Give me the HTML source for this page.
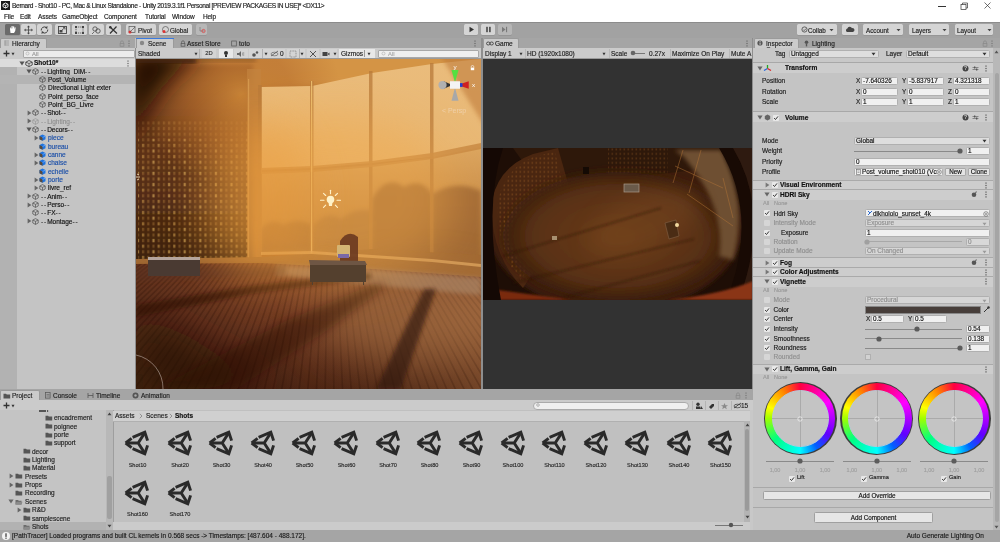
<!DOCTYPE html>
<html><head><meta charset="utf-8">
<style>
*{box-sizing:border-box;margin:0;padding:0}
html,body{width:1000px;height:542px;overflow:hidden;background:#c2c2c2;font-family:"Liberation Sans",sans-serif;font-size:6.5px;color:#111;position:relative}
.a{position:absolute;display:block}
.t{position:absolute;white-space:nowrap;line-height:1;-webkit-text-stroke:0.15px currentColor}
body{-webkit-font-smoothing:antialiased}
</style></head><body>
<div id="root" style="position:absolute;left:0;top:0;width:1000px;height:542px;overflow:hidden;will-change:transform"><div class="a" style="left:0px;top:0px;width:1000px;height:11px;background:#ffffff;"></div>
<div class="a" style="left:1px;top:1px;width:9px;height:9px;background:#1a1a1a;"></div>
<svg class="a" style="left:2px;top:2px;" width="7" height="7" viewBox="0 0 7 7"><path d="M3.5 1 L6 2.3 L6 4.7 L3.5 6 L1 4.7 L1 2.3Z" fill="none" stroke="#fff" stroke-width="0.9"/><path d="M3.5 3.5 L3.5 6 M3.5 3.5 L1 2.3 M3.5 3.5 L6 2.3" stroke="#fff" stroke-width="0.7"/></svg>
<div class="t" style="left:12px;top:3.28px;font-size:6.6px;color:#222;letter-spacing:-0.33px">Bernard - Shot10 - PC, Mac &amp; Linux Standalone - Unity 2019.3.1f1 Personal [PREVIEW PACKAGES IN USE]* &lt;DX11&gt;</div>
<div class="a" style="left:938px;top:5.5px;width:8px;height:0.7px;background:#333;"></div>
<svg class="a" style="left:960px;top:1.5px;" width="9" height="9" viewBox="0 0 9 9"><rect x="1" y="2.5" width="5" height="5" fill="none" stroke="#333" stroke-width="0.7"/><path d="M2.5 2.5 V1 H7.5 V6 H6" fill="none" stroke="#333" stroke-width="0.7"/></svg>
<svg class="a" style="left:984px;top:2px;" width="7" height="7" viewBox="0 0 7 7"><path d="M0.5 0.5 L6.5 6.5 M6.5 0.5 L0.5 6.5" stroke="#333" stroke-width="0.7"/></svg>
<div class="a" style="left:0px;top:11px;width:1000px;height:11px;background:#ffffff;"></div>
<div class="t" style="left:4px;top:13.92px;font-size:6.5px;color:#1a1a1a;letter-spacing:-0.1px">File</div>
<div class="t" style="left:20px;top:13.92px;font-size:6.5px;color:#1a1a1a;letter-spacing:-0.1px">Edit</div>
<div class="t" style="left:38px;top:13.92px;font-size:6.5px;color:#1a1a1a;letter-spacing:-0.1px">Assets</div>
<div class="t" style="left:62px;top:13.92px;font-size:6.5px;color:#1a1a1a;letter-spacing:-0.1px">GameObject</div>
<div class="t" style="left:104px;top:13.92px;font-size:6.5px;color:#1a1a1a;letter-spacing:-0.1px">Component</div>
<div class="t" style="left:145px;top:13.92px;font-size:6.5px;color:#1a1a1a;letter-spacing:-0.1px">Tutorial</div>
<div class="t" style="left:172px;top:13.92px;font-size:6.5px;color:#1a1a1a;letter-spacing:-0.1px">Window</div>
<div class="t" style="left:203px;top:13.92px;font-size:6.5px;color:#1a1a1a;letter-spacing:-0.1px">Help</div>
<div class="a" style="left:0px;top:22px;width:1000px;height:16px;background:#a2a2a2;"></div>
<div class="a" style="left:0px;top:22px;width:1000px;height:1px;background:#8c8c8c;"></div>
<div class="a" style="left:5px;top:24px;width:15px;height:11px;background:#6b6b6b;border-radius:1.5px;box-shadow:0 0.5px 0 #8a8a8a"></div>
<div class="a" style="left:21px;top:24px;width:15px;height:11px;background:#d5d5d5;border-radius:1.5px;box-shadow:0 0.5px 0 #8a8a8a"></div>
<div class="a" style="left:37px;top:24px;width:15px;height:11px;background:#d5d5d5;border-radius:1.5px;box-shadow:0 0.5px 0 #8a8a8a"></div>
<div class="a" style="left:55px;top:24px;width:15px;height:11px;background:#d5d5d5;border-radius:1.5px;box-shadow:0 0.5px 0 #8a8a8a"></div>
<div class="a" style="left:72px;top:24px;width:15px;height:11px;background:#d5d5d5;border-radius:1.5px;box-shadow:0 0.5px 0 #8a8a8a"></div>
<div class="a" style="left:89px;top:24px;width:15px;height:11px;background:#d5d5d5;border-radius:1.5px;box-shadow:0 0.5px 0 #8a8a8a"></div>
<div class="a" style="left:106px;top:24px;width:15px;height:11px;background:#d5d5d5;border-radius:1.5px;box-shadow:0 0.5px 0 #8a8a8a"></div>
<div class="a" style="left:126px;top:24px;width:30px;height:11px;background:#d5d5d5;border-radius:1.5px;box-shadow:0 0.5px 0 #8a8a8a"></div>
<div class="a" style="left:159px;top:24px;width:33px;height:11px;background:#d5d5d5;border-radius:1.5px;box-shadow:0 0.5px 0 #8a8a8a"></div>
<div class="a" style="left:196px;top:24px;width:11px;height:11px;background:#b8b8b8;border-radius:1.5px;box-shadow:0 0.5px 0 #8a8a8a"></div>
<svg class="a" style="left:8px;top:25px;" width="10" height="9" viewBox="0 0 10 9"><path d="M2.5 8 L2 4 L2.6 2 L3.4 4 L3.6 1 L4.6 1 L4.8 4 L5.2 1.2 L6.2 1.4 L6.2 4.3 L6.8 2.2 L7.7 2.6 L7.2 6 L6 8Z" fill="#fff"/></svg>
<svg class="a" style="left:23px;top:24.5px;" width="11" height="10" viewBox="0 0 11 10"><path d="M5.5 2 V8 M2.5 5 H8.5" stroke="#444" stroke-width="0.8"/><path d="M5.5 0.5 L4 2.2 H7Z M5.5 9.5 L4 7.8 H7Z M1 5 L2.7 3.5 V6.5Z M10 5 L8.3 3.5 V6.5Z" fill="#444"/></svg>
<svg class="a" style="left:39px;top:24.5px;" width="11" height="10" viewBox="0 0 11 10"><path d="M2.2 5.5 A3.3 3.3 0 0 1 7.5 2.6 M8.8 4.5 A3.3 3.3 0 0 1 3.5 7.4" fill="none" stroke="#444" stroke-width="1"/><path d="M8.5 1 L8.2 4 L5.8 2.8Z M2.5 9 L2.8 6 L5.2 7.2Z" fill="#444"/></svg>
<svg class="a" style="left:57px;top:24.5px;" width="11" height="10" viewBox="0 0 11 10"><rect x="1.5" y="1.5" width="8" height="7" fill="none" stroke="#444" stroke-width="0.9"/><rect x="2.5" y="5" width="3" height="2.5" fill="#444"/><path d="M5 5 L8 2.5 M6 2.5 H8 V4.5" stroke="#444" stroke-width="0.8" fill="none"/></svg>
<svg class="a" style="left:74px;top:24.5px;" width="11" height="10" viewBox="0 0 11 10"><rect x="2" y="2" width="7" height="6" fill="none" stroke="#444" stroke-width="0.8" stroke-dasharray="1.2 0.9"/><rect x="1" y="1" width="2" height="2" fill="#444"/><rect x="8" y="1" width="2" height="2" fill="#444"/><rect x="1" y="7" width="2" height="2" fill="#444"/><rect x="8" y="7" width="2" height="2" fill="#444"/></svg>
<svg class="a" style="left:91px;top:24.5px;" width="11" height="10" viewBox="0 0 11 10"><circle cx="4" cy="4" r="2.2" fill="none" stroke="#444" stroke-width="0.8"/><circle cx="7" cy="6" r="2.2" fill="none" stroke="#444" stroke-width="0.8"/><path d="M1 9 L3 7" stroke="#444" stroke-width="0.7"/></svg>
<svg class="a" style="left:108px;top:24.5px;" width="11" height="10" viewBox="0 0 11 10"><path d="M2 2 L9 8.5 M8.5 1.5 L2 8.5" stroke="#333" stroke-width="1.2"/><circle cx="2.3" cy="2.3" r="1.3" fill="#333"/></svg>
<svg class="a" style="left:128px;top:25px;" width="9" height="9" viewBox="0 0 9 9"><rect x="1" y="1.5" width="6" height="6" fill="none" stroke="#555" stroke-width="0.7"/><circle cx="2" cy="7" r="1.5" fill="#d33" /><path d="M2 7 L7 2" stroke="#555" stroke-width="0.7"/></svg>
<div class="t" style="left:138px;top:27.82px;font-size:6.3px;color:#222;">Pivot</div>
<svg class="a" style="left:161px;top:25px;" width="9" height="9" viewBox="0 0 9 9"><circle cx="4.5" cy="4.5" r="3" fill="none" stroke="#555" stroke-width="0.7"/><circle cx="3" cy="6.5" r="1.5" fill="#d33"/></svg>
<div class="t" style="left:170px;top:27.82px;font-size:6.3px;color:#222;">Global</div>
<svg class="a" style="left:198px;top:25px;" width="8" height="9" viewBox="0 0 8 9"><path d="M2 2 V6 H6" fill="none" stroke="#777" stroke-width="0.7"/><circle cx="5.5" cy="6" r="1.6" fill="none" stroke="#d44" stroke-width="0.8"/></svg>
<div class="a" style="left:464px;top:24px;width:14px;height:11px;background:#d5d5d5;border-radius:1.5px;box-shadow:0 0.5px 0 #8a8a8a"></div>
<div class="a" style="left:481px;top:24px;width:14px;height:11px;background:#d5d5d5;border-radius:1.5px;box-shadow:0 0.5px 0 #8a8a8a"></div>
<div class="a" style="left:498px;top:24px;width:14px;height:11px;background:#b6b6b6;border-radius:1.5px;box-shadow:0 0.5px 0 #8a8a8a"></div>
<svg class="a" style="left:468px;top:26px;" width="7" height="7" viewBox="0 0 7 7"><path d="M1.5 0.8 L6 3.5 L1.5 6.2Z" fill="#333"/></svg>
<svg class="a" style="left:485px;top:26px;" width="7" height="7" viewBox="0 0 7 7"><rect x="1.3" y="0.8" width="1.4" height="5.4" fill="#333"/><rect x="4.2" y="0.8" width="1.4" height="5.4" fill="#333"/></svg>
<svg class="a" style="left:501px;top:26px;" width="8" height="7" viewBox="0 0 8 7"><path d="M1 0.8 L4.5 3.5 L1 6.2Z" fill="#7a7a7a"/><rect x="5" y="0.8" width="1.1" height="5.4" fill="#7a7a7a"/></svg>
<div class="a" style="left:797px;top:24px;width:40px;height:11px;background:#d5d5d5;border-radius:1.5px;box-shadow:0 0.5px 0 #8a8a8a"></div>
<div class="a" style="left:842px;top:24px;width:16px;height:11px;background:#d5d5d5;border-radius:1.5px;box-shadow:0 0.5px 0 #8a8a8a"></div>
<div class="a" style="left:863px;top:24px;width:40px;height:11px;background:#d5d5d5;border-radius:1.5px;box-shadow:0 0.5px 0 #8a8a8a"></div>
<div class="a" style="left:909px;top:24px;width:40px;height:11px;background:#d5d5d5;border-radius:1.5px;box-shadow:0 0.5px 0 #8a8a8a"></div>
<div class="a" style="left:955px;top:24px;width:38px;height:11px;background:#d5d5d5;border-radius:1.5px;box-shadow:0 0.5px 0 #8a8a8a"></div>
<svg class="a" style="left:801px;top:26px;" width="7" height="7" viewBox="0 0 7 7"><circle cx="3.5" cy="3.5" r="2.6" fill="none" stroke="#444" stroke-width="0.8"/><path d="M2.2 3.6 L3.2 4.6 L5 2.6" fill="none" stroke="#444" stroke-width="0.8"/></svg>
<div class="t" style="left:808px;top:27.82px;font-size:6.3px;color:#222;">Collab</div>
<svg class="a" style="left:829px;top:28px;" width="5" height="4" viewBox="0 0 5 4"><path d="M0.5 1 L4.5 1 L2.5 3.2Z" fill="#444"/></svg>
<svg class="a" style="left:845px;top:26px;" width="10" height="7" viewBox="0 0 10 7"><path d="M2 6 A1.8 1.8 0 0 1 2.4 2.6 A2.4 2.4 0 0 1 7 2.2 A1.9 1.9 0 0 1 8 6Z" fill="#444"/></svg>
<div class="t" style="left:866px;top:27.82px;font-size:6.3px;color:#222;">Account</div>
<svg class="a" style="left:896px;top:28px;" width="5" height="4" viewBox="0 0 5 4"><path d="M0.5 1 L4.5 1 L2.5 3.2Z" fill="#444"/></svg>
<div class="t" style="left:912px;top:27.82px;font-size:6.3px;color:#222;">Layers</div>
<svg class="a" style="left:942px;top:28px;" width="5" height="4" viewBox="0 0 5 4"><path d="M0.5 1 L4.5 1 L2.5 3.2Z" fill="#444"/></svg>
<div class="t" style="left:957px;top:27.82px;font-size:6.3px;color:#222;">Layout</div>
<svg class="a" style="left:987px;top:28px;" width="5" height="4" viewBox="0 0 5 4"><path d="M0.5 1 L4.5 1 L2.5 3.2Z" fill="#444"/></svg>
<div class="a" style="left:0px;top:38px;width:135px;height:10px;background:#a5a5a5;"></div>
<div class="a" style="left:0px;top:38px;width:47px;height:10px;background:#cbcbcb;border-radius:2px 2px 0 0;border:0.5px solid #9a9a9a;border-bottom:none"></div>
<svg class="a" style="left:4px;top:40px;" width="6" height="6" viewBox="0 0 6 6"><path d="M0.5 1 H5 M0.5 3 H5 M0.5 5 H5" stroke="#888" stroke-width="0.6"/><path d="M1 0.5 V5.5" stroke="#888" stroke-width="0.6"/></svg>
<div class="t" style="left:12px;top:40.82px;font-size:6.5px;color:#222;">Hierarchy</div>
<svg class="a" style="left:119px;top:40.0px;" width="6" height="7" viewBox="0 0 6 7"><path d="M1.6 3.2 V2.2 A1.4 1.4 0 0 1 4.4 2.2 V3.2" fill="none" stroke="#888" stroke-width="0.7"/><rect x="1.1" y="3.4" width="3.8" height="2.8" fill="none" stroke="#888" stroke-width="0.7"/></svg>
<svg class="a" style="left:128px;top:40.0px;" width="2" height="7" viewBox="0 0 2 7"><rect x="0.4" y="0.5" width="1.2" height="1.2" fill="#777"/><rect x="0.4" y="2.9" width="1.2" height="1.2" fill="#777"/><rect x="0.4" y="5.3" width="1.2" height="1.2" fill="#777"/></svg>
<div class="a" style="left:0px;top:48px;width:135px;height:11px;background:#cbcbcb;"></div>
<svg class="a" style="left:3px;top:50px;" width="8" height="7" viewBox="0 0 8 7"><path d="M3.5 0.5 V6.5 M0.5 3.5 H6.5" stroke="#333" stroke-width="1.3"/></svg>
<svg class="a" style="left:11px;top:52px;" width="4" height="4" viewBox="0 0 4 4"><path d="M0.5 0.8 L3.5 0.8 L2.0 3.4Z" fill="#333"/></svg>
<div class="a" style="left:23px;top:50px;width:112px;height:8px;background:#ececec;border:0.5px solid #a8a8a8;border-radius:1px"></div>
<svg class="a" style="left:25px;top:51px;" width="6" height="6" viewBox="0 0 6 6"><circle cx="2.5" cy="2.5" r="1.5" fill="none" stroke="#aaa" stroke-width="0.6"/></svg>
<div class="t" style="left:32px;top:51.67px;font-size:5.8px;color:#999;">All</div>
<div class="a" style="left:0px;top:59px;width:135px;height:330px;background:#c4c4c4;"></div>
<div class="a" style="left:0px;top:67px;width:17px;height:322px;background:#b2b2b2;"></div>
<div class="a" style="left:0px;top:59px;width:135px;height:8px;background:#dcdcdc;"></div>
<svg class="a" style="left:19px;top:60.5px;" width="6" height="5" viewBox="0 0 6 5"><path d="M0.4 0.6 L5.6 0.6 L3 4.4Z" fill="#555"/></svg>
<svg class="a" style="left:25px;top:59.5px;" width="8" height="7" viewBox="0 0 8 7"><path d="M4 0.5 L7.2 2.2 L7.2 5 L4 6.6 L0.8 5 L0.8 2.2Z" fill="none" stroke="#333" stroke-width="0.8"/><path d="M4 3.5 V6.5 M4 3.5 L0.8 2.2 M4 3.5 L7.2 2.2" stroke="#333" stroke-width="0.7"/></svg>
<div class="t" style="left:34px;top:60.32px;font-size:6.5px;color:#111;font-weight:bold;">Shot10*</div>
<svg class="a" style="left:127px;top:59.5px;" width="2" height="7" viewBox="0 0 2 7"><rect x="0.4" y="0.5" width="1.2" height="1.2" fill="#666"/><rect x="0.4" y="2.9" width="1.2" height="1.2" fill="#666"/><rect x="0.4" y="5.3" width="1.2" height="1.2" fill="#666"/></svg>
<svg class="a" style="left:26px;top:68.83px;" width="6" height="5" viewBox="0 0 6 5"><path d="M0.4 0.6 L5.6 0.6 L3 4.4Z" fill="#555"/></svg>
<svg class="a" style="left:32px;top:67.83px;" width="7" height="7" viewBox="0 0 7 7"><path d="M3.5 0.6 L6.2 2 L6.2 5 L3.5 6.4 L0.8 5 L0.8 2Z M0.8 2 L3.5 3.4 L6.2 2 M3.5 3.4 V6.4" fill="none" stroke="#555" stroke-width="0.75"/></svg>
<div class="t" style="left:41px;top:68.65px;font-size:6.5px;color:#111;"><span style="letter-spacing:0.9px">-</span><span style="letter-spacing:0.9px">-</span>Lighting_DiM<span style="letter-spacing:0.9px">-</span><span style="letter-spacing:0.9px">-</span></div>
<div class="a" style="left:0px;top:75.46px;width:135px;height:8.4px;background:#b4b4b4;"></div>
<svg class="a" style="left:39px;top:76.16px;" width="7" height="7" viewBox="0 0 7 7"><path d="M3.5 0.6 L6.2 2 L6.2 5 L3.5 6.4 L0.8 5 L0.8 2Z M0.8 2 L3.5 3.4 L6.2 2 M3.5 3.4 V6.4" fill="none" stroke="#555" stroke-width="0.75"/></svg>
<div class="t" style="left:48px;top:76.98px;font-size:6.5px;color:#111;">Post_Volume</div>
<svg class="a" style="left:39px;top:84.49000000000001px;" width="7" height="7" viewBox="0 0 7 7"><path d="M3.5 0.6 L6.2 2 L6.2 5 L3.5 6.4 L0.8 5 L0.8 2Z M0.8 2 L3.5 3.4 L6.2 2 M3.5 3.4 V6.4" fill="none" stroke="#555" stroke-width="0.75"/></svg>
<div class="t" style="left:48px;top:85.31px;font-size:6.5px;color:#111;">Directional Light exter</div>
<svg class="a" style="left:39px;top:92.82px;" width="7" height="7" viewBox="0 0 7 7"><path d="M3.5 0.6 L6.2 2 L6.2 5 L3.5 6.4 L0.8 5 L0.8 2Z M0.8 2 L3.5 3.4 L6.2 2 M3.5 3.4 V6.4" fill="none" stroke="#555" stroke-width="0.75"/></svg>
<div class="t" style="left:48px;top:93.64px;font-size:6.5px;color:#111;">Point_perso_face</div>
<svg class="a" style="left:39px;top:101.15px;" width="7" height="7" viewBox="0 0 7 7"><path d="M3.5 0.6 L6.2 2 L6.2 5 L3.5 6.4 L0.8 5 L0.8 2Z M0.8 2 L3.5 3.4 L6.2 2 M3.5 3.4 V6.4" fill="none" stroke="#555" stroke-width="0.75"/></svg>
<div class="t" style="left:48px;top:101.97px;font-size:6.5px;color:#111;">Point_BG_Livre</div>
<svg class="a" style="left:26.5px;top:109.98px;" width="5" height="6" viewBox="0 0 5 6"><path d="M0.6 0.4 L4.4 3 L0.6 5.6Z" fill="#666"/></svg>
<svg class="a" style="left:32px;top:109.48px;" width="7" height="7" viewBox="0 0 7 7"><path d="M3.5 0.6 L6.2 2 L6.2 5 L3.5 6.4 L0.8 5 L0.8 2Z M0.8 2 L3.5 3.4 L6.2 2 M3.5 3.4 V6.4" fill="none" stroke="#555" stroke-width="0.75"/></svg>
<div class="t" style="left:41px;top:110.30px;font-size:6.5px;color:#111;"><span style="letter-spacing:0.9px">-</span><span style="letter-spacing:0.9px">-</span>Shot<span style="letter-spacing:0.9px">-</span><span style="letter-spacing:0.9px">-</span></div>
<svg class="a" style="left:26.5px;top:118.31px;" width="5" height="6" viewBox="0 0 5 6"><path d="M0.6 0.4 L4.4 3 L0.6 5.6Z" fill="#666"/></svg>
<svg class="a" style="left:32px;top:117.81px;" width="7" height="7" viewBox="0 0 7 7"><path d="M3.5 0.6 L6.2 2 L6.2 5 L3.5 6.4 L0.8 5 L0.8 2Z M0.8 2 L3.5 3.4 L6.2 2 M3.5 3.4 V6.4" fill="none" stroke="#9a9a9a" stroke-width="0.75"/></svg>
<div class="t" style="left:41px;top:118.63px;font-size:6.5px;color:#8f8f8f;"><span style="letter-spacing:0.9px">-</span><span style="letter-spacing:0.9px">-</span>Lighting<span style="letter-spacing:0.9px">-</span><span style="letter-spacing:0.9px">-</span></div>
<svg class="a" style="left:26px;top:127.13999999999999px;" width="6" height="5" viewBox="0 0 6 5"><path d="M0.4 0.6 L5.6 0.6 L3 4.4Z" fill="#555"/></svg>
<svg class="a" style="left:32px;top:126.13999999999999px;" width="7" height="7" viewBox="0 0 7 7"><path d="M3.5 0.6 L6.2 2 L6.2 5 L3.5 6.4 L0.8 5 L0.8 2Z M0.8 2 L3.5 3.4 L6.2 2 M3.5 3.4 V6.4" fill="none" stroke="#555" stroke-width="0.75"/></svg>
<div class="t" style="left:41px;top:126.96px;font-size:6.5px;color:#111;"><span style="letter-spacing:0.9px">-</span><span style="letter-spacing:0.9px">-</span>Decors<span style="letter-spacing:0.9px">-</span><span style="letter-spacing:0.9px">-</span></div>
<svg class="a" style="left:33.5px;top:134.97px;" width="5" height="6" viewBox="0 0 5 6"><path d="M0.6 0.4 L4.4 3 L0.6 5.6Z" fill="#666"/></svg>
<svg class="a" style="left:39px;top:134.47px;" width="7" height="7" viewBox="0 0 7 7"><path d="M3.5 0.5 L6.5 2 L6.5 5.2 L3.5 6.7 L0.5 5.2 L0.5 2Z" fill="#1f74e0"/><path d="M0.5 2 L3.5 3.5 L3.5 6.7 L0.5 5.2Z" fill="#5a4a3a"/><path d="M3.5 3.5 L6.5 2" stroke="#9cc4ff" stroke-width="0.5"/></svg>
<div class="t" style="left:48px;top:135.29px;font-size:6.5px;color:#1b4fa8;">piece</div>
<svg class="a" style="left:39px;top:142.8px;" width="7" height="7" viewBox="0 0 7 7"><path d="M3.5 0.5 L6.5 2 L6.5 5.2 L3.5 6.7 L0.5 5.2 L0.5 2Z" fill="#1f74e0"/><path d="M0.5 2 L3.5 3.5 L3.5 6.7 L0.5 5.2Z" fill="#5a4a3a"/><path d="M3.5 3.5 L6.5 2" stroke="#9cc4ff" stroke-width="0.5"/></svg>
<div class="t" style="left:48px;top:143.62px;font-size:6.5px;color:#1b4fa8;">bureau</div>
<svg class="a" style="left:33.5px;top:151.63px;" width="5" height="6" viewBox="0 0 5 6"><path d="M0.6 0.4 L4.4 3 L0.6 5.6Z" fill="#666"/></svg>
<svg class="a" style="left:39px;top:151.13px;" width="7" height="7" viewBox="0 0 7 7"><path d="M3.5 0.5 L6.5 2 L6.5 5.2 L3.5 6.7 L0.5 5.2 L0.5 2Z" fill="#1f74e0"/><path d="M0.5 2 L3.5 3.5 L3.5 6.7 L0.5 5.2Z" fill="#5a4a3a"/><path d="M3.5 3.5 L6.5 2" stroke="#9cc4ff" stroke-width="0.5"/></svg>
<div class="t" style="left:48px;top:151.95px;font-size:6.5px;color:#1b4fa8;">canne</div>
<svg class="a" style="left:33.5px;top:159.96px;" width="5" height="6" viewBox="0 0 5 6"><path d="M0.6 0.4 L4.4 3 L0.6 5.6Z" fill="#666"/></svg>
<svg class="a" style="left:39px;top:159.46px;" width="7" height="7" viewBox="0 0 7 7"><path d="M3.5 0.5 L6.5 2 L6.5 5.2 L3.5 6.7 L0.5 5.2 L0.5 2Z" fill="#1f74e0"/><path d="M0.5 2 L3.5 3.5 L3.5 6.7 L0.5 5.2Z" fill="#5a4a3a"/><path d="M3.5 3.5 L6.5 2" stroke="#9cc4ff" stroke-width="0.5"/></svg>
<div class="t" style="left:48px;top:160.28px;font-size:6.5px;color:#1b4fa8;">chaise</div>
<svg class="a" style="left:39px;top:167.79000000000002px;" width="7" height="7" viewBox="0 0 7 7"><path d="M3.5 0.5 L6.5 2 L6.5 5.2 L3.5 6.7 L0.5 5.2 L0.5 2Z" fill="#1f74e0"/><path d="M0.5 2 L3.5 3.5 L3.5 6.7 L0.5 5.2Z" fill="#5a4a3a"/><path d="M3.5 3.5 L6.5 2" stroke="#9cc4ff" stroke-width="0.5"/></svg>
<div class="t" style="left:48px;top:168.61px;font-size:6.5px;color:#1b4fa8;">echelle</div>
<svg class="a" style="left:33.5px;top:176.62px;" width="5" height="6" viewBox="0 0 5 6"><path d="M0.6 0.4 L4.4 3 L0.6 5.6Z" fill="#666"/></svg>
<svg class="a" style="left:39px;top:176.12px;" width="7" height="7" viewBox="0 0 7 7"><path d="M3.5 0.5 L6.5 2 L6.5 5.2 L3.5 6.7 L0.5 5.2 L0.5 2Z" fill="#1f74e0"/><path d="M0.5 2 L3.5 3.5 L3.5 6.7 L0.5 5.2Z" fill="#5a4a3a"/><path d="M3.5 3.5 L6.5 2" stroke="#9cc4ff" stroke-width="0.5"/></svg>
<div class="t" style="left:48px;top:176.94px;font-size:6.5px;color:#1b4fa8;">porte</div>
<svg class="a" style="left:33.5px;top:184.95px;" width="5" height="6" viewBox="0 0 5 6"><path d="M0.6 0.4 L4.4 3 L0.6 5.6Z" fill="#666"/></svg>
<svg class="a" style="left:39px;top:184.45px;" width="7" height="7" viewBox="0 0 7 7"><path d="M3.5 0.6 L6.2 2 L6.2 5 L3.5 6.4 L0.8 5 L0.8 2Z M0.8 2 L3.5 3.4 L6.2 2 M3.5 3.4 V6.4" fill="none" stroke="#555" stroke-width="0.75"/></svg>
<div class="t" style="left:48px;top:185.27px;font-size:6.5px;color:#111;">livre_ref</div>
<svg class="a" style="left:26.5px;top:193.28px;" width="5" height="6" viewBox="0 0 5 6"><path d="M0.6 0.4 L4.4 3 L0.6 5.6Z" fill="#666"/></svg>
<svg class="a" style="left:32px;top:192.78px;" width="7" height="7" viewBox="0 0 7 7"><path d="M3.5 0.6 L6.2 2 L6.2 5 L3.5 6.4 L0.8 5 L0.8 2Z M0.8 2 L3.5 3.4 L6.2 2 M3.5 3.4 V6.4" fill="none" stroke="#555" stroke-width="0.75"/></svg>
<div class="t" style="left:41px;top:193.60px;font-size:6.5px;color:#111;"><span style="letter-spacing:0.9px">-</span><span style="letter-spacing:0.9px">-</span>Anim<span style="letter-spacing:0.9px">-</span><span style="letter-spacing:0.9px">-</span></div>
<svg class="a" style="left:26.5px;top:201.61px;" width="5" height="6" viewBox="0 0 5 6"><path d="M0.6 0.4 L4.4 3 L0.6 5.6Z" fill="#666"/></svg>
<svg class="a" style="left:32px;top:201.11px;" width="7" height="7" viewBox="0 0 7 7"><path d="M3.5 0.6 L6.2 2 L6.2 5 L3.5 6.4 L0.8 5 L0.8 2Z M0.8 2 L3.5 3.4 L6.2 2 M3.5 3.4 V6.4" fill="none" stroke="#555" stroke-width="0.75"/></svg>
<div class="t" style="left:41px;top:201.93px;font-size:6.5px;color:#111;"><span style="letter-spacing:0.9px">-</span><span style="letter-spacing:0.9px">-</span>Perso<span style="letter-spacing:0.9px">-</span><span style="letter-spacing:0.9px">-</span></div>
<svg class="a" style="left:32px;top:209.44px;" width="7" height="7" viewBox="0 0 7 7"><path d="M3.5 0.6 L6.2 2 L6.2 5 L3.5 6.4 L0.8 5 L0.8 2Z M0.8 2 L3.5 3.4 L6.2 2 M3.5 3.4 V6.4" fill="none" stroke="#555" stroke-width="0.75"/></svg>
<div class="t" style="left:41px;top:210.26px;font-size:6.5px;color:#111;"><span style="letter-spacing:0.9px">-</span><span style="letter-spacing:0.9px">-</span>FX<span style="letter-spacing:0.9px">-</span><span style="letter-spacing:0.9px">-</span></div>
<svg class="a" style="left:26.5px;top:218.27px;" width="5" height="6" viewBox="0 0 5 6"><path d="M0.6 0.4 L4.4 3 L0.6 5.6Z" fill="#666"/></svg>
<svg class="a" style="left:32px;top:217.77px;" width="7" height="7" viewBox="0 0 7 7"><path d="M3.5 0.6 L6.2 2 L6.2 5 L3.5 6.4 L0.8 5 L0.8 2Z M0.8 2 L3.5 3.4 L6.2 2 M3.5 3.4 V6.4" fill="none" stroke="#555" stroke-width="0.75"/></svg>
<div class="t" style="left:41px;top:218.59px;font-size:6.5px;color:#111;"><span style="letter-spacing:0.9px">-</span><span style="letter-spacing:0.9px">-</span>Montage<span style="letter-spacing:0.9px">-</span><span style="letter-spacing:0.9px">-</span></div>
<div class="a" style="left:135px;top:48px;width:1px;height:341px;background:#8e8e8e;"></div>
<div class="a" style="left:136px;top:38px;width:617px;height:10px;background:#a5a5a5;"></div>
<div class="a" style="left:481px;top:38px;width:2px;height:351px;background:#8e8e8e;"></div>
<div class="a" style="left:136px;top:38px;width:38px;height:10px;background:#cbcbcb;border-radius:2px 2px 0 0;border:0.5px solid #9a9a9a;border-bottom:none"></div>
<div class="a" style="left:136px;top:38px;width:38px;height:1px;background:#3a7ae0;"></div>
<svg class="a" style="left:139px;top:40px;" width="6" height="6" viewBox="0 0 6 6"><circle cx="3" cy="3" r="2.2" fill="#888"/></svg>
<div class="t" style="left:148px;top:40.82px;font-size:6.5px;color:#222;">Scene</div>
<svg class="a" style="left:180px;top:40.0px;" width="6" height="7" viewBox="0 0 6 7"><path d="M1.6 3.2 V2.2 A1.4 1.4 0 0 1 4.4 2.2 V3.2" fill="none" stroke="#555" stroke-width="0.7"/><rect x="1.1" y="3.4" width="3.8" height="2.8" fill="none" stroke="#555" stroke-width="0.7"/></svg>
<div class="t" style="left:187px;top:40.82px;font-size:6.5px;color:#222;">Asset Store</div>
<svg class="a" style="left:231px;top:40px;" width="6" height="7" viewBox="0 0 6 7"><rect x="0.7" y="1" width="4.6" height="5" fill="none" stroke="#555" stroke-width="0.7"/></svg>
<div class="t" style="left:239px;top:40.82px;font-size:6.5px;color:#222;">toto</div>
<svg class="a" style="left:474px;top:40.0px;" width="2" height="7" viewBox="0 0 2 7"><rect x="0.4" y="0.5" width="1.2" height="1.2" fill="#666"/><rect x="0.4" y="2.9" width="1.2" height="1.2" fill="#666"/><rect x="0.4" y="5.3" width="1.2" height="1.2" fill="#666"/></svg>
<div class="a" style="left:136px;top:48px;width:345px;height:11px;background:#cbcbcb;"></div>
<div class="a" style="left:136px;top:58px;width:345px;height:1px;background:#9a9a9a;"></div>
<div class="t" style="left:138px;top:50.92px;font-size:6.5px;color:#222;">Shaded</div>
<svg class="a" style="left:194px;top:52px;" width="4" height="4" viewBox="0 0 4 4"><path d="M0.5 0.8 L3.5 0.8 L2.0 3.4Z" fill="#333"/></svg>
<div class="a" style="left:199px;top:49px;width:1px;height:9px;background:#b0b0b0;"></div>
<div class="a" style="left:202px;top:49px;width:14px;height:9px;background:#d4d4d4;"></div>
<div class="t" style="left:209px;top:51.27px;font-size:5.8px;color:#333;transform:translateX(-50%);">2D</div>
<div class="a" style="left:219px;top:49px;width:14px;height:9px;background:#e8e8e8;"></div>
<svg class="a" style="left:222px;top:50px;" width="8" height="8" viewBox="0 0 8 8"><circle cx="4" cy="3" r="2" fill="#333"/><rect x="3" y="5" width="2" height="2" fill="#333"/></svg>
<div class="a" style="left:234px;top:49px;width:14px;height:9px;background:#d4d4d4;"></div>
<svg class="a" style="left:236px;top:50px;" width="9" height="8" viewBox="0 0 9 8"><path d="M1 3 H3 L5 1 V7 L3 5 H1Z" fill="#666"/><path d="M6.5 2.5 V5.5 M7.7 2 V6" stroke="#777" stroke-width="0.5"/></svg>
<div class="a" style="left:249px;top:49px;width:36px;height:9px;background:#d4d4d4;"></div>
<svg class="a" style="left:251px;top:50px;" width="9" height="8" viewBox="0 0 9 8"><circle cx="3" cy="5" r="1.8" fill="#555"/><circle cx="6" cy="2.5" r="1.2" fill="#555"/></svg>
<div class="a" style="left:262px;top:49px;width:1px;height:9px;background:#b0b0b0;"></div>
<svg class="a" style="left:264px;top:52px;" width="4" height="4" viewBox="0 0 4 4"><path d="M0.5 0.8 L3.5 0.8 L2.0 3.4Z" fill="#333"/></svg>
<svg class="a" style="left:270px;top:50px;" width="9" height="8" viewBox="0 0 9 8"><path d="M1 6 L8 1" stroke="#555" stroke-width="0.8"/><ellipse cx="4.5" cy="4" rx="3.5" ry="1.8" fill="none" stroke="#555" stroke-width="0.6"/></svg>
<div class="t" style="left:280px;top:50.92px;font-size:6.5px;color:#222;">0</div>
<div class="a" style="left:287px;top:49px;width:18px;height:9px;background:#d4d4d4;"></div>
<svg class="a" style="left:289px;top:50px;" width="8" height="8" viewBox="0 0 8 8"><rect x="1" y="1" width="6" height="6" fill="none" stroke="#666" stroke-width="0.6" stroke-dasharray="1 0.6"/></svg>
<div class="a" style="left:299px;top:49px;width:1px;height:9px;background:#b0b0b0;"></div>
<svg class="a" style="left:300px;top:52px;" width="4" height="4" viewBox="0 0 4 4"><path d="M0.5 0.8 L3.5 0.8 L2.0 3.4Z" fill="#333"/></svg>
<div class="a" style="left:307px;top:49px;width:12px;height:9px;background:#d4d4d4;"></div>
<svg class="a" style="left:309px;top:50px;" width="8" height="8" viewBox="0 0 8 8"><path d="M1 1 L7 7 M7 1 L1 7" stroke="#444" stroke-width="0.9"/></svg>
<div class="a" style="left:321px;top:49px;width:16px;height:9px;background:#d4d4d4;"></div>
<svg class="a" style="left:322px;top:50px;" width="8" height="8" viewBox="0 0 8 8"><rect x="0.5" y="2" width="5" height="4" fill="#444"/><path d="M5.5 4 L7.5 2.5 V5.5Z" fill="#444"/></svg>
<svg class="a" style="left:333px;top:52px;" width="4" height="4" viewBox="0 0 4 4"><path d="M0.5 0.8 L3.5 0.8 L2.0 3.4Z" fill="#333"/></svg>
<div class="a" style="left:339px;top:49px;width:36px;height:9px;background:#e8e8e8;"></div>
<div class="t" style="left:341px;top:50.92px;font-size:6.5px;color:#222;">Gizmos</div>
<div class="a" style="left:364px;top:50px;width:0.6px;height:7px;background:#999;"></div>
<svg class="a" style="left:367px;top:52px;" width="4" height="4" viewBox="0 0 4 4"><path d="M0.5 0.8 L3.5 0.8 L2.0 3.4Z" fill="#333"/></svg>
<div class="a" style="left:378px;top:50px;width:101px;height:8px;background:#efefef;border:0.5px solid #a8a8a8;border-radius:1px"></div>
<svg class="a" style="left:381px;top:51px;" width="6" height="6" viewBox="0 0 6 6"><circle cx="2.5" cy="2.5" r="1.5" fill="none" stroke="#aaa" stroke-width="0.6"/></svg>
<div class="t" style="left:388px;top:51.67px;font-size:5.8px;color:#aaa;">All</div>
<svg class="a" style="left:136px;top:59px;" width="345" height="330" viewBox="0 0 345 330"><defs><filter id="b2" x="-20%" y="-20%" width="140%" height="140%"><feGaussianBlur stdDeviation="2"/></filter><filter id="b4" x="-30%" y="-30%" width="160%" height="160%"><feGaussianBlur stdDeviation="5"/></filter><filter id="b10" x="-50%" y="-50%" width="200%" height="200%"><feGaussianBlur stdDeviation="12"/></filter><filter id="b20" x="-50%" y="-50%" width="200%" height="200%"><feGaussianBlur stdDeviation="22"/></filter><filter id="b1"><feGaussianBlur stdDeviation="0.7"/></filter><filter id="b05"><feGaussianBlur stdDeviation="0.4"/></filter><pattern id="dots" width="5.2" height="5.6" patternUnits="userSpaceOnUse"><rect x="0.8" y="0.8" width="2.2" height="3.2" fill="#d09848" opacity="0.7"/></pattern><pattern id="dots2" width="15.6" height="11.2" patternUnits="userSpaceOnUse"><rect x="0.8" y="0.8" width="2.2" height="3.2" fill="#f8d070" opacity="0.8"/><rect x="6" y="6.4" width="2.2" height="3.2" fill="#f0c060" opacity="0.6"/></pattern><pattern id="stripes" width="4" height="3.5" patternUnits="userSpaceOnUse" patternTransform="rotate(-18)"><rect width="4" height="1.2" fill="#200800" opacity="0.18"/></pattern><linearGradient id="floorg" x1="0" y1="0" x2="0" y2="1"><stop offset="0" stop-color="#8a4a2c"/><stop offset="0.5" stop-color="#703a22"/><stop offset="1" stop-color="#4e2614"/></linearGradient><linearGradient id="winTop" x1="0" y1="0" x2="0" y2="1"><stop offset="0" stop-color="#eabc7c"/><stop offset="1" stop-color="#e8b672"/></linearGradient><linearGradient id="winLow" x1="0" y1="0" x2="0" y2="1"><stop offset="0" stop-color="#dca660"/><stop offset="0.5" stop-color="#c88c48"/><stop offset="1" stop-color="#b07838"/></linearGradient><radialGradient id="vig" cx="0" cy="0" r="1"><stop offset="0" stop-color="#1e0c04"/><stop offset="0.35" stop-color="#2a1206" stop-opacity="0.85"/><stop offset="1" stop-color="#2a1206" stop-opacity="0"/></radialGradient><linearGradient id="wallg" x1="0" y1="0" x2="0" y2="1"><stop offset="0" stop-color="#8a4c20"/><stop offset="0.4" stop-color="#623416"/><stop offset="1" stop-color="#3a200e"/></linearGradient><linearGradient id="hazeg" x1="0" y1="0" x2="0.3" y2="1"><stop offset="0" stop-color="#c07a34" stop-opacity="0.9"/><stop offset="0.45" stop-color="#b87030" stop-opacity="0.5"/><stop offset="0.9" stop-color="#b87030" stop-opacity="0"/></linearGradient><radialGradient id="hazer"><stop offset="0" stop-color="#c88438" stop-opacity="0.95"/><stop offset="0.5" stop-color="#b87030" stop-opacity="0.6"/><stop offset="1" stop-color="#b87030" stop-opacity="0"/></radialGradient><linearGradient id="floorh" x1="0" y1="0" x2="1" y2="0"><stop offset="0" stop-color="#2a1006" stop-opacity="0.35"/><stop offset="0.5" stop-color="#2a1006" stop-opacity="0"/><stop offset="1" stop-color="#b07848" stop-opacity="0.35"/></linearGradient></defs><rect width="345" height="330" fill="#a86528"/><path d="M60 -20 H365 V60 L300 80 L190 30 L60 30Z" fill="#d49444" filter="url(#b4)"/><rect x="-5" y="5" width="122" height="205" fill="url(#wallg)" filter="url(#b2)"/><rect x="2" y="62" width="110" height="144" fill="url(#dots)" opacity="0.45"/><rect x="2" y="80" width="110" height="126" fill="url(#dots2)" opacity="0.45"/><ellipse cx="105" cy="35" rx="100" ry="95" fill="url(#hazer)"/><rect x="111" y="10" width="14" height="195" fill="#c48440" opacity="0.7" filter="url(#b1)"/><rect x="112" y="20" width="1.2" height="185" fill="#e8b060" opacity="0.5"/><path d="M125 28 L176 27 L236 14 L296 5 L345 0 V100 L296 98 L236 104 L176 109 L125 111Z" fill="url(#winTop)"/><path d="M125 113 L176 111 L236 106 L296 98 L345 88 V205 L296 200 L236 196 L176 192 L125 193Z" fill="url(#winLow)"/><path d="M125 193 V170 Q135 158 148 166 Q160 158 176 166 V192Z" fill="#9a6432" opacity="0.8" filter="url(#b2)"/><path d="M176 192 V168 Q190 150 205 160 Q220 148 236 152 V196Z" fill="#a06a38" opacity="0.6" filter="url(#b2)"/><path d="M236 196 V140 Q250 115 268 128 Q285 118 296 135 V200Z" fill="#9a6432" opacity="0.8" filter="url(#b2)"/><path d="M296 200 V135 Q320 120 345 132 V205Z" fill="#9a6432" opacity="0.8" filter="url(#b2)"/><g fill="#b87a3a" opacity="0.75"><rect x="122" y="26" width="4" height="180"/><rect x="174" y="22" width="3.5" height="180"/><rect x="233" y="12" width="3.5" height="190"/><rect x="294" y="4" width="3.5" height="198"/></g><path d="M125 109 L176 107 L236 102 L296 94 L345 84 V90 L296 100 L236 108 L176 113 L125 115Z" fill="#c88a44" opacity="0.85"/><rect x="175" y="22" width="1.2" height="180" fill="#f4c878" opacity="0.8"/><path d="M300 -10 L360 -10 V85 Z" fill="#c07c3a" opacity="0.6" filter="url(#b2)"/><path d="M0 200 L125 198 L236 190 L345 196 V222 L236 212 L125 206 L0 208Z" fill="#a06830" filter="url(#b1)"/><path d="M125 193 L176 192 L236 196 L296 200 L345 205 V208 L296 203 L236 199 L176 195 L125 196Z" fill="#e0a860" opacity="0.8"/><clipPath id="floorclip"><path d="M0 205 L125 204 L236 210 L345 218 V330 H0Z"/></clipPath><path d="M0 205 L125 204 L236 210 L345 218 V330 H0Z" fill="url(#floorg)"/><path d="M0 205 L125 204 L236 210 L345 218 V330 H0Z" fill="url(#floorh)"/><g clip-path="url(#floorclip)"><path d="M194 60 L-360 340 M194 60 L-351 340 M194 60 L-342 340 M194 60 L-333 340 M194 60 L-324 340 M194 60 L-315 340 M194 60 L-306 340 M194 60 L-297 340 M194 60 L-288 340 M194 60 L-279 340 M194 60 L-270 340 M194 60 L-261 340 M194 60 L-252 340 M194 60 L-243 340 M194 60 L-234 340 M194 60 L-225 340 M194 60 L-216 340 M194 60 L-207 340 M194 60 L-198 340 M194 60 L-189 340 M194 60 L-180 340 M194 60 L-171 340 M194 60 L-162 340 M194 60 L-153 340 M194 60 L-144 340 M194 60 L-135 340 M194 60 L-126 340 M194 60 L-117 340 M194 60 L-108 340 M194 60 L-99 340 M194 60 L-90 340 M194 60 L-81 340 M194 60 L-72 340 M194 60 L-63 340 M194 60 L-54 340 M194 60 L-45 340 M194 60 L-36 340 M194 60 L-27 340 M194 60 L-18 340 M194 60 L-9 340 M194 60 L0 340 M194 60 L9 340 M194 60 L18 340 M194 60 L27 340 M194 60 L36 340 M194 60 L45 340 M194 60 L54 340 M194 60 L63 340 M194 60 L72 340 M194 60 L81 340 M194 60 L90 340 M194 60 L99 340 M194 60 L108 340 M194 60 L117 340 M194 60 L126 340 M194 60 L135 340 M194 60 L144 340 M194 60 L153 340 M194 60 L162 340 M194 60 L171 340 M194 60 L180 340 M194 60 L189 340 M194 60 L198 340 M194 60 L207 340 M194 60 L216 340 M194 60 L225 340 M194 60 L234 340 M194 60 L243 340 M194 60 L252 340 M194 60 L261 340 M194 60 L270 340 M194 60 L279 340 M194 60 L288 340 M194 60 L297 340 M194 60 L306 340 M194 60 L315 340 M194 60 L324 340 M194 60 L333 340 M194 60 L342 340 M194 60 L351 340 M194 60 L360 340 M194 60 L369 340 M194 60 L378 340 M194 60 L387 340 M194 60 L396 340 M194 60 L405 340 M194 60 L414 340 M194 60 L423 340 M194 60 L432 340 M194 60 L441 340 M194 60 L450 340 M194 60 L459 340 M194 60 L468 340 M194 60 L477 340 M194 60 L486 340 M194 60 L495 340 M194 60 L504 340 M194 60 L513 340 M194 60 L522 340 M194 60 L531 340" stroke="#1e0802" stroke-width="1.6" opacity="0.22" fill="none"/></g><ellipse cx="280" cy="260" rx="100" ry="45" fill="#b07a4a" opacity="0.55" filter="url(#b20)"/><path d="M0 250 L150 330 H0Z" fill="#241006" opacity="0.7" filter="url(#b20)"/><path d="M140 206 L236 210 L345 219 V236 L236 226 L140 216Z" fill="#a88262" opacity="0.75" filter="url(#b2)"/><path d="M0 208 L150 206 L150 216 L0 222Z" fill="#5a3020" opacity="0.5" filter="url(#b2)"/><path d="M0 246 L120 226 L235 214 L235 220 L120 234 L0 258Z" fill="#2a1006" opacity="0.55" filter="url(#b2)"/><path d="M20 330 L150 262 L240 224 L252 226 L190 272 L100 330Z" fill="#2a1006" opacity="0.45" filter="url(#b4)"/><path d="M240 330 L288 230 L300 230 L265 330Z" fill="#2e1408" opacity="0.65" filter="url(#b2)"/><ellipse cx="200" cy="140" rx="120" ry="85" fill="#f0a848" opacity="0.45" filter="url(#b20)"/><ellipse cx="120" cy="140" rx="55" ry="85" fill="#e89838" opacity="0.4" filter="url(#b20)"/><path d="M-10 -10 H70 Q20 20 -10 90Z" fill="#241006" filter="url(#b10)"/><path d="M0 0 H60 V4 H0Z" fill="#3a1a08" filter="url(#b2)"/><rect x="0" y="-2" width="120" height="5" fill="#5a3014" opacity="0.35" filter="url(#b2)"/><rect x="12" y="198" width="52" height="19" fill="#4a3a32"/><rect x="12" y="198" width="52" height="3" fill="#d0c0b8" opacity="0.8"/><path d="M204 182 Q212 170 222 178 V206 H204Z" fill="#6a3820" opacity="0.9"/><rect x="201" y="186" width="13" height="12" fill="#d4b474" rx="1"/><rect x="202" y="195" width="11" height="4" fill="#7a68a8"/><path d="M173 201 L229 202 L231 206 L174 206Z" fill="#6e5644"/><rect x="174" y="206" width="56" height="17" fill="#54402e"/><rect x="176" y="223" width="1" height="3" fill="#54402e"/><rect x="227" y="223" width="1" height="3" fill="#54402e"/><g transform="translate(194.5,141.3)" stroke="#fff2c8" stroke-width="1.1" stroke-linecap="round"><line x1="0" y1="-10" x2="0" y2="-6.5"/><line x1="-10" y1="0" x2="-6.5" y2="0"/><line x1="10" y1="0" x2="6.5" y2="0"/><line x1="-7" y1="-7" x2="-4.8" y2="-4.8"/><line x1="7" y1="-7" x2="4.8" y2="-4.8"/><line x1="-7" y1="7" x2="-4.8" y2="4.8"/><line x1="7" y1="7" x2="4.8" y2="4.8"/></g><circle cx="194.5" cy="140.5" r="3.8" fill="#fff2c8"/><path d="M192.5 143 H196.5 L196 147 H193Z" fill="#fff2c8"/><g transform="translate(1,118)" stroke="#fff0d0" stroke-width="0.8"><line x1="-3" y1="0" x2="3" y2="0"/><line x1="0" y1="-3" x2="2" y2="-2"/><line x1="0" y1="3" x2="2" y2="2"/></g><path d="M0 296 A34 34 0 0 1 27 330" fill="none" stroke="#c8b8b0" stroke-width="0.7" opacity="0.8"/><g transform="translate(319,26) scale(1.25)"><path d="M0 -2 L-2.8 -12 L2.8 -12Z" fill="#55e040"/><path d="M0 2 L-2.8 12.5 L2.8 12.5Z" fill="#a8a8a8"/><path d="M2 0 L11 -3 L11 3Z" fill="#d02020"/><path d="M-2 0 L-9 -3 L-9 3Z" fill="#333"/><circle cx="-10" cy="0" r="3.3" fill="#b0b0b0"/><rect x="-4" y="-3" width="8" height="6" fill="#f4f4f4"/><rect x="4" y="-1.5" width="2" height="3" fill="#2040d0"/><text x="0" y="-12.5" font-size="5" font-family="Liberation Sans" fill="#fff" text-anchor="middle">y</text><text x="13.5" y="1.8" font-size="5" font-family="Liberation Sans" fill="#fff">x</text><text x="-10.5" y="22.5" font-size="5.6" font-family="Liberation Sans" fill="#f0d0a8">&lt; Persp</text></g><g transform="translate(334,6)"><path d="M1.2 2.6 V1.8 A1.3 1.3 0 0 1 3.8 1.8 V2.6" fill="none" stroke="#fff" stroke-width="0.6"/><rect x="0.8" y="2.6" width="3.4" height="2.6" fill="#fff"/></g></svg>
<div class="a" style="left:483px;top:38px;width:36px;height:10px;background:#cbcbcb;border-radius:2px 2px 0 0;border:0.5px solid #9a9a9a;border-bottom:none"></div>
<svg class="a" style="left:486px;top:41px;" width="8" height="5" viewBox="0 0 8 5"><ellipse cx="2.3" cy="2.5" rx="1.8" ry="1.5" fill="none" stroke="#333" stroke-width="0.8"/><ellipse cx="5.6" cy="2.5" rx="1.8" ry="1.5" fill="none" stroke="#333" stroke-width="0.8"/></svg>
<div class="t" style="left:495px;top:40.82px;font-size:6.5px;color:#222;">Game</div>
<svg class="a" style="left:746px;top:40.0px;" width="2" height="7" viewBox="0 0 2 7"><rect x="0.4" y="0.5" width="1.2" height="1.2" fill="#666"/><rect x="0.4" y="2.9" width="1.2" height="1.2" fill="#666"/><rect x="0.4" y="5.3" width="1.2" height="1.2" fill="#666"/></svg>
<div class="a" style="left:483px;top:48px;width:270px;height:11px;background:#cbcbcb;"></div>
<div class="a" style="left:483px;top:58px;width:270px;height:1px;background:#9a9a9a;"></div>
<div class="t" style="left:485px;top:50.92px;font-size:6.5px;color:#222;">Display 1</div>
<svg class="a" style="left:519px;top:52px;" width="4" height="4" viewBox="0 0 4 4"><path d="M0.5 0.8 L3.5 0.8 L2.0 3.4Z" fill="#333"/></svg>
<div class="a" style="left:525px;top:49px;width:1px;height:9px;background:#b8b8b8;"></div>
<div class="t" style="left:527px;top:50.92px;font-size:6.5px;color:#222;">HD (1920x1080)</div>
<svg class="a" style="left:602px;top:52px;" width="4" height="4" viewBox="0 0 4 4"><path d="M0.5 0.8 L3.5 0.8 L2.0 3.4Z" fill="#333"/></svg>
<div class="a" style="left:609px;top:49px;width:1px;height:9px;background:#b8b8b8;"></div>
<div class="t" style="left:611px;top:50.92px;font-size:6.5px;color:#222;">Scale</div>
<div class="a" style="left:632px;top:53px;width:13px;height:0.8px;background:#777;"></div>
<svg class="a" style="left:630px;top:50px;" width="6" height="6" viewBox="0 0 6 6"><circle cx="3" cy="3" r="2.3" fill="#666"/></svg>
<div class="t" style="left:649px;top:50.92px;font-size:6.5px;color:#222;">0.27x</div>
<div class="a" style="left:670px;top:49px;width:1px;height:9px;background:#b8b8b8;"></div>
<div class="t" style="left:672px;top:50.92px;font-size:6.5px;color:#222;">Maximize On Play</div>
<div class="a" style="left:729px;top:49px;width:1px;height:9px;background:#b8b8b8;"></div>
<div class="t" style="left:731px;top:50.92px;font-size:6.5px;color:#222;">Mute A</div>
<div class="a" style="left:483px;top:59px;width:270px;height:330px;background:#323232;"></div>
<svg class="a" style="left:483px;top:148px;" width="270" height="152" viewBox="0 0 270 152"><defs><filter id="g2" x="-30%" y="-30%" width="160%" height="160%"><feGaussianBlur stdDeviation="2"/></filter><filter id="g4" x="-30%" y="-30%" width="160%" height="160%"><feGaussianBlur stdDeviation="4"/></filter><filter id="g10" x="-50%" y="-50%" width="200%" height="200%"><feGaussianBlur stdDeviation="10"/></filter><filter id="g1"><feGaussianBlur stdDeviation="0.8"/></filter><pattern id="gdots" width="4" height="4.5" patternUnits="userSpaceOnUse"><rect x="0.5" y="0.5" width="1.6" height="1.8" fill="#c07830" opacity="0.8"/></pattern><radialGradient id="gfloor" cx="0.5" cy="0.5" r="0.5"><stop offset="0" stop-color="#6a3c1a"/><stop offset="0.75" stop-color="#583014"/><stop offset="1" stop-color="#3a1e0a"/></radialGradient></defs><rect width="270" height="152" fill="#1e0e06"/><ellipse cx="132" cy="78" rx="128" ry="86" fill="#3a1e0c" filter="url(#g2)"/><path d="M30 0 H240 V18 Q140 34 50 28Z" fill="#2e180a"/><path d="M125 0 H185 V26 H125Z" fill="url(#gdots)" opacity="0.3"/><path d="M8 60 Q12 20 50 6 L75 0 L92 60 L40 140 Q10 110 8 60Z" fill="#4a2610"/><path d="M14 60 Q18 22 52 8 L72 4 L85 58 L38 132 Q16 105 14 60Z" fill="url(#gdots)" opacity="0.35"/><path d="M20 70 L40 55 L45 100 L28 120Z" fill="url(#gdots)" opacity="0.6"/><ellipse cx="135" cy="88" rx="115" ry="64" fill="url(#gfloor)" filter="url(#g4)"/><path d="M192 2 L238 2 Q266 55 250 112 L236 108 Q244 60 200 8Z" fill="#6e5030" filter="url(#g2)"/><ellipse cx="160" cy="75" rx="60" ry="28" fill="#7a4a22" opacity="0.4" filter="url(#g10)" transform="rotate(-25 160 75)"/><path d="M200 2 L190 35 M218 2 L206 45 M192 18 L240 40 M204 46 L250 78 M240 30 L250 70" stroke="#b87838" stroke-width="0.9" opacity="0.5" fill="none"/><path d="M236 0 Q274 62 248 140 L260 140 Q286 60 250 0Z" fill="#180a04"/><path d="M250 0 Q286 60 260 140 L270 140 V0Z" fill="#2e1a10"/><path d="M20 108 L178 60 M30 135 L211 91 M80 150 L217 113" stroke="#2a1206" stroke-width="1.8" opacity="0.5" fill="none" filter="url(#g1)"/><path d="M0 140 Q60 148 90 152 H0Z" fill="#7a2c10" filter="url(#g1)"/><path d="M185 152 Q240 146 270 133 V152Z" fill="#8a3414" filter="url(#g1)"/><rect x="100" y="19" width="6" height="7" fill="#140a04"/><rect x="141" y="36" width="15" height="8" fill="#6a5a4a" stroke="#a89888" stroke-width="0.7"/><path d="M182 75 L193 72 L196 88 L186 91Z" fill="#4a2c14" stroke="#8a6a50" stroke-width="0.5"/><circle cx="194" cy="77" r="2" fill="#f0d8a0"/><rect x="69" y="88" width="5" height="4" fill="#a89070"/><path d="M0 0 L20 0 Q0 60 18 152 H0Z" fill="#140804"/></svg>
<div class="a" style="left:753px;top:38px;width:247px;height:10px;background:#a5a5a5;"></div>
<div class="a" style="left:752px;top:38px;width:1px;height:492px;background:#8e8e8e;"></div>
<div class="a" style="left:753px;top:48px;width:247px;height:482px;background:#c4c4c4;"></div>
<div class="a" style="left:754px;top:38px;width:45px;height:10px;background:#cbcbcb;border-radius:2px 2px 0 0;border:0.5px solid #9a9a9a;border-bottom:none"></div>
<svg class="a" style="left:757px;top:40px;" width="6" height="6" viewBox="0 0 6 6"><circle cx="3" cy="3" r="2.6" fill="#555"/><rect x="2.6" y="2.5" width="0.9" height="2.3" fill="#ddd"/><rect x="2.6" y="1.1" width="0.9" height="0.9" fill="#ddd"/></svg>
<div class="t" style="left:766px;top:40.82px;font-size:6.5px;color:#222;">Inspector</div>
<svg class="a" style="left:766px;top:47px;" width="5" height="3" viewBox="0 0 5 3"><path d="M0.5 0.3 H4.5 L2.5 2.6Z" fill="#444"/></svg>
<svg class="a" style="left:804px;top:40px;" width="5" height="7" viewBox="0 0 5 7"><circle cx="2.5" cy="2.3" r="1.8" fill="#555"/><rect x="1.8" y="4" width="1.4" height="2.4" fill="#555"/></svg>
<div class="t" style="left:812px;top:40.82px;font-size:6.5px;color:#222;">Lighting</div>
<svg class="a" style="left:982px;top:40.0px;" width="6" height="7" viewBox="0 0 6 7"><path d="M1.6 3.2 V2.2 A1.4 1.4 0 0 1 4.4 2.2 V3.2" fill="none" stroke="#888" stroke-width="0.7"/><rect x="1.1" y="3.4" width="3.8" height="2.8" fill="none" stroke="#888" stroke-width="0.7"/></svg>
<svg class="a" style="left:991px;top:40.0px;" width="2" height="7" viewBox="0 0 2 7"><rect x="0.4" y="0.5" width="1.2" height="1.2" fill="#777"/><rect x="0.4" y="2.9" width="1.2" height="1.2" fill="#777"/><rect x="0.4" y="5.3" width="1.2" height="1.2" fill="#777"/></svg>
<div class="a" style="left:753px;top:48px;width:240px;height:14px;background:#c8c8c8;"></div>
<div class="t" style="left:775px;top:51.12px;font-size:6.5px;color:#1a1a1a;">Tag</div>
<div class="a" style="left:789px;top:49.5px;width:90px;height:8px;background:#dedede;border:0.5px solid #b0b0b0;border-radius:1.5px"></div>
<div class="t" style="left:791px;top:50.87px;font-size:6.4px;color:#111;">Untagged</div>
<svg class="a" style="left:871px;top:52.0px;" width="5" height="4" viewBox="0 0 5 4"><path d="M0.5 0.8 L4.5 0.8 L2.5 3.4Z" fill="#333"/></svg>
<div class="t" style="left:886px;top:51.12px;font-size:6.5px;color:#1a1a1a;">Layer</div>
<div class="a" style="left:906px;top:49.5px;width:84px;height:8px;background:#dedede;border:0.5px solid #b0b0b0;border-radius:1.5px"></div>
<div class="t" style="left:908px;top:50.87px;font-size:6.4px;color:#111;">Default</div>
<svg class="a" style="left:982px;top:52.0px;" width="5" height="4" viewBox="0 0 5 4"><path d="M0.5 0.8 L4.5 0.8 L2.5 3.4Z" fill="#333"/></svg>
<div class="a" style="left:993px;top:48px;width:7px;height:482px;background:#b8b8b8;"></div>
<svg class="a" style="left:994px;top:50px;" width="5" height="4" viewBox="0 0 5 4"><path d="M0.5 3.2 H4.5 L2.5 0.6Z" fill="#555"/></svg>
<div class="a" style="left:994.5px;top:73px;width:4px;height:449px;background:#a5a5a5;border-radius:2px"></div>
<svg class="a" style="left:994px;top:525px;" width="5" height="4" viewBox="0 0 5 4"><path d="M0.5 0.8 H4.5 L2.5 3.4Z" fill="#555"/></svg>
<div class="a" style="left:753px;top:62px;width:240px;height:1px;background:#a8a8a8;"></div>
<div class="a" style="left:753px;top:63px;width:240px;height:10px;background:#cdcdcd;"></div>
<svg class="a" style="left:757px;top:65.5px;" width="6" height="5" viewBox="0 0 6 5"><path d="M0.4 0.6 L5.6 0.6 L3 4.4Z" fill="#666"/></svg>
<svg class="a" style="left:763px;top:64px;" width="9" height="8" viewBox="0 0 9 8"><path d="M4.5 4.5 V1" stroke="#2a2" stroke-width="1.3"/><path d="M4.5 4.5 L1 6.5" stroke="#26d" stroke-width="1.3"/><path d="M4.5 4.5 L8 6.5" stroke="#d22" stroke-width="1.3"/></svg>
<div class="t" style="left:785px;top:65.28px;font-size:6.6px;color:#111;font-weight:bold;">Transform</div>
<svg class="a" style="left:962px;top:64.5px;" width="7" height="7" viewBox="0 0 7 7"><circle cx="3.5" cy="3.5" r="3" fill="#444"/><text x="3.5" y="5.4" font-size="5" font-family="Liberation Sans" font-weight="bold" fill="#ddd" text-anchor="middle">?</text></svg>
<svg class="a" style="left:972px;top:64.5px;" width="7" height="7" viewBox="0 0 7 7"><path d="M0.5 2.5 H6.5 M0.5 4.5 H6.5" stroke="#555" stroke-width="0.6"/><rect x="2" y="1.5" width="1.3" height="2" fill="#555"/><rect x="4" y="3.5" width="1.3" height="2" fill="#555"/></svg>
<svg class="a" style="left:985px;top:64.5px;" width="2" height="7" viewBox="0 0 2 7"><rect x="0.4" y="0.5" width="1.2" height="1.2" fill="#555"/><rect x="0.4" y="2.9" width="1.2" height="1.2" fill="#555"/><rect x="0.4" y="5.3" width="1.2" height="1.2" fill="#555"/></svg>
<div class="t" style="left:762px;top:77.82px;font-size:6.5px;color:#1a1a1a;">Position</div>
<div class="t" style="left:856px;top:77.87px;font-size:6.4px;color:#222;">X</div>
<div class="a" style="left:861px;top:76.5px;width:37px;height:8px;background:#f0f0f0;border:0.5px solid #b0b0b0;border-radius:1.5px"></div>
<div class="t" style="left:863px;top:77.87px;font-size:6.4px;color:#111;">-7.640326</div>
<div class="t" style="left:902px;top:77.87px;font-size:6.4px;color:#222;">Y</div>
<div class="a" style="left:907px;top:76.5px;width:37px;height:8px;background:#f0f0f0;border:0.5px solid #b0b0b0;border-radius:1.5px"></div>
<div class="t" style="left:909px;top:77.87px;font-size:6.4px;color:#111;">-5.837917</div>
<div class="t" style="left:948px;top:77.87px;font-size:6.4px;color:#222;">Z</div>
<div class="a" style="left:953px;top:76.5px;width:37px;height:8px;background:#f0f0f0;border:0.5px solid #b0b0b0;border-radius:1.5px"></div>
<div class="t" style="left:955px;top:77.87px;font-size:6.4px;color:#111;">4.321318</div>
<div class="t" style="left:762px;top:89.32px;font-size:6.5px;color:#1a1a1a;">Rotation</div>
<div class="t" style="left:856px;top:89.37px;font-size:6.4px;color:#222;">X</div>
<div class="a" style="left:861px;top:88px;width:37px;height:8px;background:#f0f0f0;border:0.5px solid #b0b0b0;border-radius:1.5px"></div>
<div class="t" style="left:863px;top:89.37px;font-size:6.4px;color:#111;">0</div>
<div class="t" style="left:902px;top:89.37px;font-size:6.4px;color:#222;">Y</div>
<div class="a" style="left:907px;top:88px;width:37px;height:8px;background:#f0f0f0;border:0.5px solid #b0b0b0;border-radius:1.5px"></div>
<div class="t" style="left:909px;top:89.37px;font-size:6.4px;color:#111;">0</div>
<div class="t" style="left:948px;top:89.37px;font-size:6.4px;color:#222;">Z</div>
<div class="a" style="left:953px;top:88px;width:37px;height:8px;background:#f0f0f0;border:0.5px solid #b0b0b0;border-radius:1.5px"></div>
<div class="t" style="left:955px;top:89.37px;font-size:6.4px;color:#111;">0</div>
<div class="t" style="left:762px;top:99.32px;font-size:6.5px;color:#1a1a1a;">Scale</div>
<div class="t" style="left:856px;top:99.37px;font-size:6.4px;color:#222;">X</div>
<div class="a" style="left:861px;top:98px;width:37px;height:8px;background:#f0f0f0;border:0.5px solid #b0b0b0;border-radius:1.5px"></div>
<div class="t" style="left:863px;top:99.37px;font-size:6.4px;color:#111;">1</div>
<div class="t" style="left:902px;top:99.37px;font-size:6.4px;color:#222;">Y</div>
<div class="a" style="left:907px;top:98px;width:37px;height:8px;background:#f0f0f0;border:0.5px solid #b0b0b0;border-radius:1.5px"></div>
<div class="t" style="left:909px;top:99.37px;font-size:6.4px;color:#111;">1</div>
<div class="t" style="left:948px;top:99.37px;font-size:6.4px;color:#222;">Z</div>
<div class="a" style="left:953px;top:98px;width:37px;height:8px;background:#f0f0f0;border:0.5px solid #b0b0b0;border-radius:1.5px"></div>
<div class="t" style="left:955px;top:99.37px;font-size:6.4px;color:#111;">1</div>
<div class="a" style="left:753px;top:111px;width:240px;height:0.8px;background:#a8a8a8;"></div>
<div class="a" style="left:753px;top:112px;width:240px;height:10px;background:#cdcdcd;"></div>
<svg class="a" style="left:757px;top:115.0px;" width="6" height="5" viewBox="0 0 6 5"><path d="M0.4 0.6 L5.6 0.6 L3 4.4Z" fill="#666"/></svg>
<svg class="a" style="left:764px;top:114px;" width="7" height="7" viewBox="0 0 7 7"><path d="M3.5 0.6 L6.2 2 L6.2 5 L3.5 6.4 L0.8 5 L0.8 2Z" fill="#666"/></svg>
<div class="a" style="left:773px;top:114.5px;width:6px;height:6px;background:#e8e8e8;border-radius:1px"></div>
<svg class="a" style="left:773px;top:114.5px;" width="6" height="6" viewBox="0 0 6 6"><path d="M1.1 3.1 L2.5 4.5 L5 1.4" fill="none" stroke="#222" stroke-width="0.9"/></svg>
<div class="t" style="left:785px;top:114.78px;font-size:6.6px;color:#111;font-weight:bold;">Volume</div>
<svg class="a" style="left:962px;top:114px;" width="7" height="7" viewBox="0 0 7 7"><circle cx="3.5" cy="3.5" r="3" fill="#444"/><text x="3.5" y="5.4" font-size="5" font-family="Liberation Sans" font-weight="bold" fill="#ddd" text-anchor="middle">?</text></svg>
<svg class="a" style="left:972px;top:114px;" width="7" height="7" viewBox="0 0 7 7"><path d="M0.5 2.5 H6.5 M0.5 4.5 H6.5" stroke="#555" stroke-width="0.6"/><rect x="2" y="1.5" width="1.3" height="2" fill="#555"/><rect x="4" y="3.5" width="1.3" height="2" fill="#555"/></svg>
<svg class="a" style="left:985px;top:114.0px;" width="2" height="7" viewBox="0 0 2 7"><rect x="0.4" y="0.5" width="1.2" height="1.2" fill="#555"/><rect x="0.4" y="2.9" width="1.2" height="1.2" fill="#555"/><rect x="0.4" y="5.3" width="1.2" height="1.2" fill="#555"/></svg>
<div class="t" style="left:762px;top:137.82px;font-size:6.5px;color:#1a1a1a;">Mode</div>
<div class="a" style="left:854px;top:136.5px;width:136px;height:8px;background:#dedede;border:0.5px solid #b0b0b0;border-radius:1.5px"></div>
<div class="t" style="left:856px;top:137.87px;font-size:6.4px;color:#111;">Global</div>
<svg class="a" style="left:982px;top:139.0px;" width="5" height="4" viewBox="0 0 5 4"><path d="M0.5 0.8 L4.5 0.8 L2.5 3.4Z" fill="#333"/></svg>
<div class="t" style="left:762px;top:148.32px;font-size:6.5px;color:#1a1a1a;">Weight</div>
<div class="a" style="left:854px;top:150.5px;width:106px;height:1px;background:#8a8a8a;"></div>
<svg class="a" style="left:957px;top:148px;" width="6" height="6" viewBox="0 0 6 6"><circle cx="3" cy="3" r="2.6" fill="#5c5c5c"/></svg>
<div class="a" style="left:966px;top:147px;width:24px;height:8px;background:#f0f0f0;border:0.5px solid #b0b0b0;border-radius:1.5px"></div>
<div class="t" style="left:968px;top:148.37px;font-size:6.4px;color:#111;">1</div>
<div class="t" style="left:762px;top:158.82px;font-size:6.5px;color:#1a1a1a;">Priority</div>
<div class="a" style="left:854px;top:157.5px;width:136px;height:8px;background:#f0f0f0;border:0.5px solid #b0b0b0;border-radius:1.5px"></div>
<div class="t" style="left:856px;top:158.87px;font-size:6.4px;color:#111;">0</div>
<div class="t" style="left:762px;top:169.32px;font-size:6.5px;color:#1a1a1a;">Profile</div>
<div class="a" style="left:854px;top:168px;width:89px;height:8px;background:#f0f0f0;border:0.5px solid #b0b0b0;border-radius:1.5px"></div>
<svg class="a" style="left:856px;top:169px;" width="5" height="6" viewBox="0 0 5 6"><rect x="0.5" y="0.5" width="4" height="5" fill="none" stroke="#666" stroke-width="0.6"/><path d="M1.5 2 H3.5 M1.5 3.5 H3.5" stroke="#666" stroke-width="0.5"/></svg>
<div class="t" style="left:862px;top:169.37px;font-size:6.4px;color:#111;">Post_volume_shot010 (Vc</div>
<svg class="a" style="left:936px;top:169px;" width="6" height="6" viewBox="0 0 6 6"><circle cx="3" cy="3" r="2.3" fill="#eee" stroke="#555" stroke-width="0.6"/><circle cx="3" cy="3" r="0.8" fill="#555"/></svg>
<div class="a" style="left:945px;top:168px;width:21px;height:8px;background:#e4e4e4;border:0.5px solid #aaa;border-radius:1px"></div>
<div class="t" style="left:955.5px;top:169.42px;font-size:6.3px;color:#111;transform:translateX(-50%);">New</div>
<div class="a" style="left:968px;top:168px;width:22px;height:8px;background:#e4e4e4;border:0.5px solid #aaa;border-radius:1px"></div>
<div class="t" style="left:979px;top:169.42px;font-size:6.3px;color:#111;transform:translateX(-50%);">Clone</div>
<div class="a" style="left:753px;top:180px;width:240px;height:10px;background:#cdcdcd;"></div>
<div class="a" style="left:753px;top:179.5px;width:240px;height:0.8px;background:#aaaaaa;"></div>
<svg class="a" style="left:764.5px;top:182px;" width="5" height="6" viewBox="0 0 5 6"><path d="M0.6 0.4 L4.4 3 L0.6 5.6Z" fill="#777"/></svg>
<div class="a" style="left:772px;top:182px;width:6px;height:6px;background:#e8e8e8;border-radius:1px"></div>
<svg class="a" style="left:772px;top:182px;" width="6" height="6" viewBox="0 0 6 6"><path d="M1.1 3.1 L2.5 4.5 L5 1.4" fill="none" stroke="#222" stroke-width="0.9"/></svg>
<div class="t" style="left:780px;top:182.28px;font-size:6.6px;color:#111;font-weight:bold;">Visual Environment</div>
<svg class="a" style="left:985px;top:181.5px;" width="2" height="7" viewBox="0 0 2 7"><rect x="0.4" y="0.5" width="1.2" height="1.2" fill="#555"/><rect x="0.4" y="2.9" width="1.2" height="1.2" fill="#555"/><rect x="0.4" y="5.3" width="1.2" height="1.2" fill="#555"/></svg>
<div class="a" style="left:753px;top:189.8px;width:240px;height:10px;background:#cdcdcd;"></div>
<div class="a" style="left:753px;top:189.3px;width:240px;height:0.8px;background:#aaaaaa;"></div>
<svg class="a" style="left:764px;top:192.3px;" width="6" height="5" viewBox="0 0 6 5"><path d="M0.4 0.6 L5.6 0.6 L3 4.4Z" fill="#666"/></svg>
<div class="a" style="left:772px;top:191.8px;width:6px;height:6px;background:#e8e8e8;border-radius:1px"></div>
<svg class="a" style="left:772px;top:191.8px;" width="6" height="6" viewBox="0 0 6 6"><path d="M1.1 3.1 L2.5 4.5 L5 1.4" fill="none" stroke="#222" stroke-width="0.9"/></svg>
<div class="t" style="left:780px;top:192.08px;font-size:6.6px;color:#111;font-weight:bold;">HDRI Sky</div>
<svg class="a" style="left:971px;top:191.3px;" width="7" height="7" viewBox="0 0 7 7"><circle cx="3" cy="3.8" r="2.3" fill="#555"/><path d="M4 1.5 L6 0.8" stroke="#555" stroke-width="0.8"/></svg>
<svg class="a" style="left:985px;top:191.3px;" width="2" height="7" viewBox="0 0 2 7"><rect x="0.4" y="0.5" width="1.2" height="1.2" fill="#555"/><rect x="0.4" y="2.9" width="1.2" height="1.2" fill="#555"/><rect x="0.4" y="5.3" width="1.2" height="1.2" fill="#555"/></svg>
<div class="t" style="left:763px;top:201.36px;font-size:5.6px;color:#9a9a9a;">All</div>
<div class="t" style="left:774px;top:201.36px;font-size:5.6px;color:#9a9a9a;">None</div>
<div class="a" style="left:764px;top:210.4px;width:6px;height:6px;background:#e8e8e8;border-radius:1px"></div>
<svg class="a" style="left:764px;top:210.4px;" width="6" height="6" viewBox="0 0 6 6"><path d="M1.1 3.1 L2.5 4.5 L5 1.4" fill="none" stroke="#222" stroke-width="0.9"/></svg>
<div class="t" style="left:773.5px;top:210.72px;font-size:6.5px;color:#1a1a1a;">Hdri Sky</div>
<div class="a" style="left:865px;top:209.4px;width:125px;height:8px;background:#f0f0f0;border:0.5px solid #b0b0b0;border-radius:1.5px"></div>
<svg class="a" style="left:867px;top:210px;" width="6" height="6" viewBox="0 0 6 6"><path d="M1 5 L5 1 M1 1 L3 3" stroke="#2a6ad0" stroke-width="1"/></svg>
<div class="t" style="left:873px;top:210.77px;font-size:6.4px;color:#111;">dikhololo_sunset_4k</div>
<svg class="a" style="left:983px;top:210.5px;" width="6" height="6" viewBox="0 0 6 6"><circle cx="3" cy="3" r="2.3" fill="#eee" stroke="#555" stroke-width="0.6"/><circle cx="3" cy="3" r="0.8" fill="#555"/></svg>
<div class="a" style="left:764px;top:220px;width:6px;height:6px;background:#d6d6d6;border-radius:1px"></div>
<div class="t" style="left:773.5px;top:220.32px;font-size:6.5px;color:#8f8f8f;">Intensity Mode</div>
<div class="a" style="left:865px;top:219px;width:125px;height:8px;background:#d6d6d6;border:0.5px solid #b0b0b0;border-radius:1.5px"></div>
<div class="t" style="left:867px;top:220.37px;font-size:6.4px;color:#8f8f8f;">Exposure</div>
<svg class="a" style="left:982px;top:221.5px;" width="5" height="4" viewBox="0 0 5 4"><path d="M0.5 0.8 L4.5 0.8 L2.5 3.4Z" fill="#999"/></svg>
<div class="a" style="left:764px;top:229.5px;width:6px;height:6px;background:#e8e8e8;border-radius:1px"></div>
<svg class="a" style="left:764px;top:229.5px;" width="6" height="6" viewBox="0 0 6 6"><path d="M1.1 3.1 L2.5 4.5 L5 1.4" fill="none" stroke="#222" stroke-width="0.9"/></svg>
<div class="t" style="left:781px;top:229.82px;font-size:6.5px;color:#1a1a1a;">Exposure</div>
<div class="a" style="left:865px;top:228.5px;width:125px;height:8px;background:#f0f0f0;border:0.5px solid #b0b0b0;border-radius:1.5px"></div>
<div class="t" style="left:867px;top:229.87px;font-size:6.4px;color:#111;">1</div>
<div class="a" style="left:764px;top:238.7px;width:6px;height:6px;background:#d6d6d6;border-radius:1px"></div>
<div class="t" style="left:773.5px;top:239.02px;font-size:6.5px;color:#8f8f8f;">Rotation</div>
<div class="a" style="left:867px;top:241.2px;width:95px;height:1px;background:#a8a8a8;"></div>
<svg class="a" style="left:864px;top:238.7px;" width="6" height="6" viewBox="0 0 6 6"><circle cx="3" cy="3" r="2.6" fill="#a0a0a0"/></svg>
<div class="a" style="left:966px;top:237.7px;width:24px;height:8px;background:#d8d8d8;border:0.5px solid #b0b0b0;border-radius:1.5px"></div>
<div class="t" style="left:968px;top:239.07px;font-size:6.4px;color:#8f8f8f;">0</div>
<div class="a" style="left:764px;top:248px;width:6px;height:6px;background:#d6d6d6;border-radius:1px"></div>
<div class="t" style="left:773.5px;top:248.32px;font-size:6.5px;color:#8f8f8f;">Update Mode</div>
<div class="a" style="left:865px;top:247px;width:125px;height:8px;background:#d6d6d6;border:0.5px solid #b0b0b0;border-radius:1.5px"></div>
<div class="t" style="left:867px;top:248.37px;font-size:6.4px;color:#8f8f8f;">On Changed</div>
<svg class="a" style="left:982px;top:249.5px;" width="5" height="4" viewBox="0 0 5 4"><path d="M0.5 0.8 L4.5 0.8 L2.5 3.4Z" fill="#999"/></svg>
<div class="a" style="left:753px;top:257.5px;width:240px;height:10px;background:#cdcdcd;"></div>
<div class="a" style="left:753px;top:257.0px;width:240px;height:0.8px;background:#aaaaaa;"></div>
<svg class="a" style="left:764.5px;top:259.5px;" width="5" height="6" viewBox="0 0 5 6"><path d="M0.6 0.4 L4.4 3 L0.6 5.6Z" fill="#777"/></svg>
<div class="a" style="left:772px;top:259.5px;width:6px;height:6px;background:#e8e8e8;border-radius:1px"></div>
<svg class="a" style="left:772px;top:259.5px;" width="6" height="6" viewBox="0 0 6 6"><path d="M1.1 3.1 L2.5 4.5 L5 1.4" fill="none" stroke="#222" stroke-width="0.9"/></svg>
<div class="t" style="left:780px;top:259.78px;font-size:6.6px;color:#111;font-weight:bold;">Fog</div>
<svg class="a" style="left:971px;top:259.0px;" width="7" height="7" viewBox="0 0 7 7"><circle cx="3" cy="3.8" r="2.3" fill="#555"/><path d="M4 1.5 L6 0.8" stroke="#555" stroke-width="0.8"/></svg>
<svg class="a" style="left:985px;top:259.0px;" width="2" height="7" viewBox="0 0 2 7"><rect x="0.4" y="0.5" width="1.2" height="1.2" fill="#555"/><rect x="0.4" y="2.9" width="1.2" height="1.2" fill="#555"/><rect x="0.4" y="5.3" width="1.2" height="1.2" fill="#555"/></svg>
<div class="a" style="left:753px;top:267px;width:240px;height:10px;background:#cdcdcd;"></div>
<div class="a" style="left:753px;top:266.5px;width:240px;height:0.8px;background:#aaaaaa;"></div>
<svg class="a" style="left:764.5px;top:269px;" width="5" height="6" viewBox="0 0 5 6"><path d="M0.6 0.4 L4.4 3 L0.6 5.6Z" fill="#777"/></svg>
<div class="a" style="left:772px;top:269px;width:6px;height:6px;background:#e8e8e8;border-radius:1px"></div>
<svg class="a" style="left:772px;top:269px;" width="6" height="6" viewBox="0 0 6 6"><path d="M1.1 3.1 L2.5 4.5 L5 1.4" fill="none" stroke="#222" stroke-width="0.9"/></svg>
<div class="t" style="left:780px;top:269.28px;font-size:6.6px;color:#111;font-weight:bold;">Color Adjustments</div>
<svg class="a" style="left:985px;top:268.5px;" width="2" height="7" viewBox="0 0 2 7"><rect x="0.4" y="0.5" width="1.2" height="1.2" fill="#555"/><rect x="0.4" y="2.9" width="1.2" height="1.2" fill="#555"/><rect x="0.4" y="5.3" width="1.2" height="1.2" fill="#555"/></svg>
<div class="a" style="left:753px;top:276.6px;width:240px;height:10px;background:#cdcdcd;"></div>
<div class="a" style="left:753px;top:276.1px;width:240px;height:0.8px;background:#aaaaaa;"></div>
<svg class="a" style="left:764px;top:279.1px;" width="6" height="5" viewBox="0 0 6 5"><path d="M0.4 0.6 L5.6 0.6 L3 4.4Z" fill="#666"/></svg>
<div class="a" style="left:772px;top:278.6px;width:6px;height:6px;background:#e8e8e8;border-radius:1px"></div>
<svg class="a" style="left:772px;top:278.6px;" width="6" height="6" viewBox="0 0 6 6"><path d="M1.1 3.1 L2.5 4.5 L5 1.4" fill="none" stroke="#222" stroke-width="0.9"/></svg>
<div class="t" style="left:780px;top:278.88px;font-size:6.6px;color:#111;font-weight:bold;">Vignette</div>
<svg class="a" style="left:985px;top:278.1px;" width="2" height="7" viewBox="0 0 2 7"><rect x="0.4" y="0.5" width="1.2" height="1.2" fill="#555"/><rect x="0.4" y="2.9" width="1.2" height="1.2" fill="#555"/><rect x="0.4" y="5.3" width="1.2" height="1.2" fill="#555"/></svg>
<div class="t" style="left:763px;top:287.76px;font-size:5.6px;color:#9a9a9a;">All</div>
<div class="t" style="left:774px;top:287.76px;font-size:5.6px;color:#9a9a9a;">None</div>
<div class="a" style="left:764px;top:297px;width:6px;height:6px;background:#d6d6d6;border-radius:1px"></div>
<div class="t" style="left:773.5px;top:297.32px;font-size:6.5px;color:#8f8f8f;">Mode</div>
<div class="a" style="left:865px;top:296px;width:125px;height:8px;background:#d6d6d6;border:0.5px solid #b0b0b0;border-radius:1.5px"></div>
<div class="t" style="left:867px;top:297.37px;font-size:6.4px;color:#8f8f8f;">Procedural</div>
<svg class="a" style="left:982px;top:298.5px;" width="5" height="4" viewBox="0 0 5 4"><path d="M0.5 0.8 L4.5 0.8 L2.5 3.4Z" fill="#999"/></svg>
<div class="a" style="left:764px;top:306.5px;width:6px;height:6px;background:#e8e8e8;border-radius:1px"></div>
<svg class="a" style="left:764px;top:306.5px;" width="6" height="6" viewBox="0 0 6 6"><path d="M1.1 3.1 L2.5 4.5 L5 1.4" fill="none" stroke="#222" stroke-width="0.9"/></svg>
<div class="t" style="left:773.5px;top:306.82px;font-size:6.5px;color:#1a1a1a;">Color</div>
<div class="a" style="left:865px;top:305.5px;width:116px;height:8px;background:#473e3a;border:0.5px solid #888"></div>
<svg class="a" style="left:983px;top:305.5px;" width="7" height="7" viewBox="0 0 7 7"><path d="M1 6 L5 2" stroke="#333" stroke-width="1"/><circle cx="5.5" cy="1.5" r="1.2" fill="#333"/></svg>
<div class="a" style="left:764px;top:316px;width:6px;height:6px;background:#e8e8e8;border-radius:1px"></div>
<svg class="a" style="left:764px;top:316px;" width="6" height="6" viewBox="0 0 6 6"><path d="M1.1 3.1 L2.5 4.5 L5 1.4" fill="none" stroke="#222" stroke-width="0.9"/></svg>
<div class="t" style="left:773.5px;top:316.32px;font-size:6.5px;color:#1a1a1a;">Center</div>
<div class="t" style="left:866px;top:316.37px;font-size:6.4px;color:#222;">X</div>
<div class="a" style="left:871px;top:315px;width:33px;height:8px;background:#f0f0f0;border:0.5px solid #b0b0b0;border-radius:1.5px"></div>
<div class="t" style="left:873px;top:316.37px;font-size:6.4px;color:#111;">0.5</div>
<div class="t" style="left:908px;top:316.37px;font-size:6.4px;color:#222;">Y</div>
<div class="a" style="left:913px;top:315px;width:34px;height:8px;background:#f0f0f0;border:0.5px solid #b0b0b0;border-radius:1.5px"></div>
<div class="t" style="left:915px;top:316.37px;font-size:6.4px;color:#111;">0.5</div>
<div class="a" style="left:764px;top:326px;width:6px;height:6px;background:#e8e8e8;border-radius:1px"></div>
<svg class="a" style="left:764px;top:326px;" width="6" height="6" viewBox="0 0 6 6"><path d="M1.1 3.1 L2.5 4.5 L5 1.4" fill="none" stroke="#222" stroke-width="0.9"/></svg>
<div class="t" style="left:773.5px;top:326.32px;font-size:6.5px;color:#1a1a1a;">Intensity</div>
<div class="a" style="left:865px;top:328.5px;width:97px;height:1px;background:#8a8a8a;"></div>
<svg class="a" style="left:914px;top:326px;" width="6" height="6" viewBox="0 0 6 6"><circle cx="3" cy="3" r="2.6" fill="#5c5c5c"/></svg>
<div class="a" style="left:966px;top:325px;width:24px;height:8px;background:#f0f0f0;border:0.5px solid #b0b0b0;border-radius:1.5px"></div>
<div class="t" style="left:968px;top:326.37px;font-size:6.4px;color:#111;">0.54</div>
<div class="a" style="left:764px;top:335.5px;width:6px;height:6px;background:#e8e8e8;border-radius:1px"></div>
<svg class="a" style="left:764px;top:335.5px;" width="6" height="6" viewBox="0 0 6 6"><path d="M1.1 3.1 L2.5 4.5 L5 1.4" fill="none" stroke="#222" stroke-width="0.9"/></svg>
<div class="t" style="left:773.5px;top:335.82px;font-size:6.5px;color:#1a1a1a;">Smoothness</div>
<div class="a" style="left:865px;top:338.0px;width:97px;height:1px;background:#8a8a8a;"></div>
<svg class="a" style="left:876px;top:335.5px;" width="6" height="6" viewBox="0 0 6 6"><circle cx="3" cy="3" r="2.6" fill="#5c5c5c"/></svg>
<div class="a" style="left:966px;top:334.5px;width:24px;height:8px;background:#f0f0f0;border:0.5px solid #b0b0b0;border-radius:1.5px"></div>
<div class="t" style="left:968px;top:335.87px;font-size:6.4px;color:#111;">0.138</div>
<div class="a" style="left:764px;top:345px;width:6px;height:6px;background:#e8e8e8;border-radius:1px"></div>
<svg class="a" style="left:764px;top:345px;" width="6" height="6" viewBox="0 0 6 6"><path d="M1.1 3.1 L2.5 4.5 L5 1.4" fill="none" stroke="#222" stroke-width="0.9"/></svg>
<div class="t" style="left:773.5px;top:345.32px;font-size:6.5px;color:#1a1a1a;">Roundness</div>
<div class="a" style="left:865px;top:347.5px;width:97px;height:1px;background:#8a8a8a;"></div>
<svg class="a" style="left:957px;top:345px;" width="6" height="6" viewBox="0 0 6 6"><circle cx="3" cy="3" r="2.6" fill="#5c5c5c"/></svg>
<div class="a" style="left:966px;top:344px;width:24px;height:8px;background:#f0f0f0;border:0.5px solid #b0b0b0;border-radius:1.5px"></div>
<div class="t" style="left:968px;top:345.37px;font-size:6.4px;color:#111;">1</div>
<div class="a" style="left:764px;top:354px;width:6px;height:6px;background:#d6d6d6;border-radius:1px"></div>
<div class="t" style="left:773.5px;top:354.32px;font-size:6.5px;color:#8f8f8f;">Rounded</div>
<div class="a" style="left:865px;top:354px;width:6px;height:6px;background:#d2d2d2;border:0.5px solid #b0b0b0"></div>
<div class="a" style="left:753px;top:364px;width:240px;height:10px;background:#cdcdcd;"></div>
<div class="a" style="left:753px;top:363.5px;width:240px;height:0.8px;background:#aaaaaa;"></div>
<svg class="a" style="left:764px;top:366.5px;" width="6" height="5" viewBox="0 0 6 5"><path d="M0.4 0.6 L5.6 0.6 L3 4.4Z" fill="#666"/></svg>
<div class="a" style="left:772px;top:366px;width:6px;height:6px;background:#e8e8e8;border-radius:1px"></div>
<svg class="a" style="left:772px;top:366px;" width="6" height="6" viewBox="0 0 6 6"><path d="M1.1 3.1 L2.5 4.5 L5 1.4" fill="none" stroke="#222" stroke-width="0.9"/></svg>
<div class="t" style="left:780px;top:366.28px;font-size:6.6px;color:#111;font-weight:bold;">Lift, Gamma, Gain</div>
<svg class="a" style="left:985px;top:365.5px;" width="2" height="7" viewBox="0 0 2 7"><rect x="0.4" y="0.5" width="1.2" height="1.2" fill="#555"/><rect x="0.4" y="2.9" width="1.2" height="1.2" fill="#555"/><rect x="0.4" y="5.3" width="1.2" height="1.2" fill="#555"/></svg>
<div class="t" style="left:763px;top:375.26px;font-size:5.6px;color:#9a9a9a;">All</div>
<div class="t" style="left:774px;top:375.26px;font-size:5.6px;color:#9a9a9a;">None</div>
<div class="a" style="left:763.5px;top:382.1px;width:73.0px;height:73.0px;border-radius:50%;background:#3c3c3c"></div>
<div class="a" style="left:764.8px;top:383.40000000000003px;width:70.4px;height:70.4px;border-radius:50%;background:conic-gradient(from 0deg,#ff0040,#ff00ff 60deg,#6000ff 120deg,#0060ff 150deg,#00ffff 180deg,#00ff80 230deg,#a0ff00 270deg,#ffff00 290deg,#ff8000 330deg,#ff0040)"></div>
<div class="a" style="left:771.5px;top:390.1px;width:57.0px;height:57.0px;border-radius:50%;background:#c4c4c4;border:0.6px solid #b8c8d8"></div>
<div class="a" style="left:799.7px;top:390.1px;width:0.6px;height:57.0px;background:#aaaaaa;"></div>
<div class="a" style="left:771.5px;top:418.3px;width:57.0px;height:0.6px;background:#aaaaaa;"></div>
<svg class="a" style="left:797px;top:415.6px;" width="6" height="6" viewBox="0 0 6 6"><circle cx="3" cy="3" r="2.2" fill="none" stroke="#eee" stroke-width="0.8"/></svg>
<div class="a" style="left:766px;top:460.5px;width:68px;height:1px;background:#8a8a8a;"></div>
<svg class="a" style="left:797px;top:458px;" width="6" height="6" viewBox="0 0 6 6"><circle cx="3" cy="3" r="2.6" fill="#5c5c5c"/></svg>
<div class="t" style="left:775px;top:468.31px;font-size:5.5px;color:#a0a0a0;transform:translateX(-50%);">1,00</div>
<div class="t" style="left:800px;top:468.31px;font-size:5.5px;color:#a0a0a0;transform:translateX(-50%);">1,00</div>
<div class="t" style="left:825px;top:468.31px;font-size:5.5px;color:#a0a0a0;transform:translateX(-50%);">1,00</div>
<div class="a" style="left:840.3px;top:382.1px;width:73.0px;height:73.0px;border-radius:50%;background:#3c3c3c"></div>
<div class="a" style="left:841.5999999999999px;top:383.40000000000003px;width:70.4px;height:70.4px;border-radius:50%;background:conic-gradient(from 0deg,#ff0040,#ff00ff 60deg,#6000ff 120deg,#0060ff 150deg,#00ffff 180deg,#00ff80 230deg,#a0ff00 270deg,#ffff00 290deg,#ff8000 330deg,#ff0040)"></div>
<div class="a" style="left:848.3px;top:390.1px;width:57.0px;height:57.0px;border-radius:50%;background:#c4c4c4;border:0.6px solid #b8c8d8"></div>
<div class="a" style="left:876.5px;top:390.1px;width:0.6px;height:57.0px;background:#aaaaaa;"></div>
<div class="a" style="left:848.3px;top:418.3px;width:57.0px;height:0.6px;background:#aaaaaa;"></div>
<svg class="a" style="left:873.8px;top:415.6px;" width="6" height="6" viewBox="0 0 6 6"><circle cx="3" cy="3" r="2.2" fill="none" stroke="#eee" stroke-width="0.8"/></svg>
<div class="a" style="left:842.8px;top:460.5px;width:68.0px;height:1px;background:#8a8a8a;"></div>
<svg class="a" style="left:873.8px;top:458px;" width="6" height="6" viewBox="0 0 6 6"><circle cx="3" cy="3" r="2.6" fill="#5c5c5c"/></svg>
<div class="t" style="left:851.8px;top:468.31px;font-size:5.5px;color:#a0a0a0;transform:translateX(-50%);">1,00</div>
<div class="t" style="left:876.8px;top:468.31px;font-size:5.5px;color:#a0a0a0;transform:translateX(-50%);">1,00</div>
<div class="t" style="left:901.8px;top:468.31px;font-size:5.5px;color:#a0a0a0;transform:translateX(-50%);">1,00</div>
<div class="a" style="left:917.5px;top:382.1px;width:73.0px;height:73.0px;border-radius:50%;background:#3c3c3c"></div>
<div class="a" style="left:918.8px;top:383.40000000000003px;width:70.4px;height:70.4px;border-radius:50%;background:conic-gradient(from 0deg,#ff0040,#ff00ff 60deg,#6000ff 120deg,#0060ff 150deg,#00ffff 180deg,#00ff80 230deg,#a0ff00 270deg,#ffff00 290deg,#ff8000 330deg,#ff0040)"></div>
<div class="a" style="left:925.5px;top:390.1px;width:57.0px;height:57.0px;border-radius:50%;background:#c4c4c4;border:0.6px solid #b8c8d8"></div>
<div class="a" style="left:953.7px;top:390.1px;width:0.6px;height:57.0px;background:#aaaaaa;"></div>
<div class="a" style="left:925.5px;top:418.3px;width:57.0px;height:0.6px;background:#aaaaaa;"></div>
<svg class="a" style="left:951px;top:415.6px;" width="6" height="6" viewBox="0 0 6 6"><circle cx="3" cy="3" r="2.2" fill="none" stroke="#eee" stroke-width="0.8"/></svg>
<div class="a" style="left:920px;top:460.5px;width:68px;height:1px;background:#8a8a8a;"></div>
<svg class="a" style="left:951px;top:458px;" width="6" height="6" viewBox="0 0 6 6"><circle cx="3" cy="3" r="2.6" fill="#5c5c5c"/></svg>
<div class="t" style="left:929px;top:468.31px;font-size:5.5px;color:#a0a0a0;transform:translateX(-50%);">1,00</div>
<div class="t" style="left:954px;top:468.31px;font-size:5.5px;color:#a0a0a0;transform:translateX(-50%);">1,00</div>
<div class="t" style="left:979px;top:468.31px;font-size:5.5px;color:#a0a0a0;transform:translateX(-50%);">1,00</div>
<div class="a" style="left:789px;top:475.5px;width:6px;height:6px;background:#e8e8e8;border-radius:1px"></div>
<svg class="a" style="left:789px;top:475.5px;" width="6" height="6" viewBox="0 0 6 6"><path d="M1.1 3.1 L2.5 4.5 L5 1.4" fill="none" stroke="#222" stroke-width="0.9"/></svg>
<div class="t" style="left:797px;top:475.26px;font-size:5.6px;color:#222;">Lift</div>
<div class="a" style="left:861px;top:475.5px;width:6px;height:6px;background:#e8e8e8;border-radius:1px"></div>
<svg class="a" style="left:861px;top:475.5px;" width="6" height="6" viewBox="0 0 6 6"><path d="M1.1 3.1 L2.5 4.5 L5 1.4" fill="none" stroke="#222" stroke-width="0.9"/></svg>
<div class="t" style="left:869px;top:475.26px;font-size:5.6px;color:#222;">Gamma</div>
<div class="a" style="left:941px;top:475.5px;width:6px;height:6px;background:#e8e8e8;border-radius:1px"></div>
<svg class="a" style="left:941px;top:475.5px;" width="6" height="6" viewBox="0 0 6 6"><path d="M1.1 3.1 L2.5 4.5 L5 1.4" fill="none" stroke="#222" stroke-width="0.9"/></svg>
<div class="t" style="left:949px;top:475.26px;font-size:5.6px;color:#222;">Gain</div>
<div class="a" style="left:753px;top:487px;width:240px;height:0.8px;background:#a8a8a8;"></div>
<div class="a" style="left:763px;top:491px;width:228px;height:9px;background:#e6e6e6;border:0.5px solid #a0a0a0;border-radius:1.5px"></div>
<div class="t" style="left:877px;top:492.92px;font-size:6.3px;color:#111;transform:translateX(-50%);">Add Override</div>
<div class="a" style="left:753px;top:507px;width:240px;height:0.8px;background:#a8a8a8;"></div>
<div class="a" style="left:814px;top:512px;width:119px;height:11px;background:#e6e6e6;border:0.5px solid #a0a0a0;border-radius:1.5px"></div>
<div class="t" style="left:873.5px;top:515.22px;font-size:6.3px;color:#111;transform:translateX(-50%);">Add Component</div>
<div class="a" style="left:0px;top:389px;width:753px;height:11px;background:#a5a5a5;"></div>
<div class="a" style="left:0px;top:389.5px;width:40px;height:10px;background:#cbcbcb;border-radius:2px 2px 0 0;border:0.5px solid #9a9a9a;border-bottom:none"></div>
<svg class="a" style="left:3px;top:392.5px;" width="8" height="6" viewBox="0 0 8 6"><path d="M0.5 0.8 H3 L3.8 1.6 H7.2 V5.5 H0.5Z" fill="#555"/></svg>
<div class="t" style="left:12px;top:392.82px;font-size:6.5px;color:#222;">Project</div>
<svg class="a" style="left:45px;top:392px;" width="6" height="7" viewBox="0 0 6 7"><rect x="0.6" y="0.6" width="4.5" height="5.5" fill="none" stroke="#555" stroke-width="0.7"/><path d="M1.5 2.5 H4.5 M1.5 4 H4.5" stroke="#555" stroke-width="0.5"/></svg>
<div class="t" style="left:53px;top:392.82px;font-size:6.5px;color:#222;">Console</div>
<svg class="a" style="left:87px;top:392px;" width="7" height="7" viewBox="0 0 7 7"><path d="M1 1 V6 M6 1 V6 M1 3.5 H6" stroke="#555" stroke-width="0.8"/></svg>
<div class="t" style="left:96px;top:392.82px;font-size:6.5px;color:#222;">Timeline</div>
<svg class="a" style="left:132px;top:392px;" width="7" height="7" viewBox="0 0 7 7"><circle cx="3.5" cy="3.5" r="3" fill="#555"/><circle cx="3.5" cy="3.5" r="1.2" fill="#aaa"/></svg>
<div class="t" style="left:141px;top:392.82px;font-size:6.5px;color:#222;">Animation</div>
<svg class="a" style="left:735px;top:391.5px;" width="6" height="7" viewBox="0 0 6 7"><path d="M1.6 3.2 V2.2 A1.4 1.4 0 0 1 4.4 2.2 V3.2" fill="none" stroke="#888" stroke-width="0.7"/><rect x="1.1" y="3.4" width="3.8" height="2.8" fill="none" stroke="#888" stroke-width="0.7"/></svg>
<svg class="a" style="left:745px;top:391.5px;" width="2" height="7" viewBox="0 0 2 7"><rect x="0.4" y="0.5" width="1.2" height="1.2" fill="#777"/><rect x="0.4" y="2.9" width="1.2" height="1.2" fill="#777"/><rect x="0.4" y="5.3" width="1.2" height="1.2" fill="#777"/></svg>
<div class="a" style="left:0px;top:400px;width:753px;height:10px;background:#cbcbcb;"></div>
<div class="a" style="left:0px;top:409.5px;width:753px;height:0.8px;background:#a8a8a8;"></div>
<svg class="a" style="left:3px;top:402px;" width="8" height="7" viewBox="0 0 8 7"><path d="M3.5 0.5 V6.5 M0.5 3.5 H6.5" stroke="#333" stroke-width="1.3"/></svg>
<svg class="a" style="left:11px;top:404px;" width="4" height="4" viewBox="0 0 4 4"><path d="M0.5 0.8 L3.5 0.8 L2.0 3.4Z" fill="#333"/></svg>
<div class="a" style="left:533px;top:401.5px;width:156px;height:8px;background:#efefef;border:0.5px solid #aaa;border-radius:4px"></div>
<svg class="a" style="left:536px;top:403px;" width="5" height="5" viewBox="0 0 5 5"><circle cx="2" cy="2" r="1.3" fill="none" stroke="#888" stroke-width="0.6"/></svg>
<div class="a" style="left:692px;top:400.5px;width:0.6px;height:9px;background:#b4b4b4;"></div>
<div class="a" style="left:705px;top:400.5px;width:0.6px;height:9px;background:#b4b4b4;"></div>
<div class="a" style="left:718px;top:400.5px;width:0.6px;height:9px;background:#b4b4b4;"></div>
<div class="a" style="left:731px;top:400.5px;width:0.6px;height:9px;background:#b4b4b4;"></div>
<svg class="a" style="left:695px;top:401.5px;" width="9" height="8" viewBox="0 0 9 8"><circle cx="3" cy="2.2" r="1.7" fill="#333"/><path d="M1 7 V4.5 H5 V7Z" fill="#333"/><path d="M6 4 L8 7 H5Z" fill="#333"/></svg>
<svg class="a" style="left:707px;top:401.5px;" width="9" height="8" viewBox="0 0 9 8"><path d="M2 5 L5 2 H7 V4 L4 7Z" fill="#333"/></svg>
<svg class="a" style="left:720px;top:401.5px;" width="9" height="8" viewBox="0 0 9 8"><path d="M4.5 1 L5.5 3.3 L8 3.3 L6 4.8 L6.8 7.2 L4.5 5.8 L2.2 7.2 L3 4.8 L1 3.3 L3.5 3.3Z" fill="#8a8a8a"/></svg>
<svg class="a" style="left:733px;top:401.5px;" width="9" height="8" viewBox="0 0 9 8"><path d="M1 6 L8 1" stroke="#333" stroke-width="0.8"/><ellipse cx="4.5" cy="4" rx="3.5" ry="1.8" fill="none" stroke="#333" stroke-width="0.7"/></svg>
<div class="t" style="left:741px;top:402.82px;font-size:6.5px;color:#222;">15</div>
<div class="a" style="left:0px;top:410px;width:113px;height:120px;background:#c4c4c4;"></div>
<div class="a" style="left:106px;top:410px;width:7px;height:120px;background:#b8b8b8;"></div>
<svg class="a" style="left:107px;top:412px;" width="5" height="4" viewBox="0 0 5 4"><path d="M0.5 3.2 H4.5 L2.5 0.6Z" fill="#444"/></svg>
<div class="a" style="left:107px;top:476px;width:5px;height:43px;background:#a0a0a0;border-radius:2px"></div>
<svg class="a" style="left:107px;top:524px;" width="5" height="4" viewBox="0 0 5 4"><path d="M0.5 0.8 H4.5 L2.5 3.4Z" fill="#444"/></svg>
<div class="a" style="left:0;top:410px;width:106px;height:3px;overflow:hidden"><div class="a" style="left:39px;top:-3px;width:7px;height:5px;background:#555"></div><div class="t" style="left:47px;top:-5.5px;font-size:6.5px;color:#222">porte</div></div>
<svg class="a" style="left:45px;top:415.0px;" width="8" height="6" viewBox="0 0 8 6"><path d="M0.5 0.8 H3 L3.8 1.6 H7.2 V5.5 H0.5Z" fill="#555"/></svg>
<div class="t" style="left:54px;top:415.32px;font-size:6.5px;color:#222;">encadrement</div>
<svg class="a" style="left:45px;top:423.35px;" width="8" height="6" viewBox="0 0 8 6"><path d="M0.5 0.8 H3 L3.8 1.6 H7.2 V5.5 H0.5Z" fill="#555"/></svg>
<div class="t" style="left:54px;top:423.67px;font-size:6.5px;color:#222;">poignee</div>
<svg class="a" style="left:45px;top:431.7px;" width="8" height="6" viewBox="0 0 8 6"><path d="M0.5 0.8 H3 L3.8 1.6 H7.2 V5.5 H0.5Z" fill="#555"/></svg>
<div class="t" style="left:54px;top:432.02px;font-size:6.5px;color:#222;">porte</div>
<svg class="a" style="left:45px;top:440.05px;" width="8" height="6" viewBox="0 0 8 6"><path d="M0.5 0.8 H3 L3.8 1.6 H7.2 V5.5 H0.5Z" fill="#555"/></svg>
<div class="t" style="left:54px;top:440.37px;font-size:6.5px;color:#222;">support</div>
<svg class="a" style="left:23px;top:448.4px;" width="8" height="6" viewBox="0 0 8 6"><path d="M0.5 0.8 H3 L3.8 1.6 H7.2 V5.5 H0.5Z" fill="#555"/></svg>
<div class="t" style="left:32px;top:448.72px;font-size:6.5px;color:#222;">decor</div>
<svg class="a" style="left:23px;top:456.75px;" width="8" height="6" viewBox="0 0 8 6"><path d="M0.5 0.8 H3 L3.8 1.6 H7.2 V5.5 H0.5Z" fill="#555"/></svg>
<div class="t" style="left:32px;top:457.07px;font-size:6.5px;color:#222;">Lighting</div>
<svg class="a" style="left:23px;top:465.1px;" width="8" height="6" viewBox="0 0 8 6"><path d="M0.5 0.8 H3 L3.8 1.6 H7.2 V5.5 H0.5Z" fill="#555"/></svg>
<div class="t" style="left:32px;top:465.42px;font-size:6.5px;color:#222;">Material</div>
<svg class="a" style="left:8.5px;top:473.45px;" width="5" height="6" viewBox="0 0 5 6"><path d="M0.6 0.4 L4.4 3 L0.6 5.6Z" fill="#666"/></svg>
<svg class="a" style="left:15px;top:473.45px;" width="8" height="6" viewBox="0 0 8 6"><path d="M0.5 0.8 H3 L3.8 1.6 H7.2 V5.5 H0.5Z" fill="#555"/></svg>
<div class="t" style="left:25px;top:473.77px;font-size:6.5px;color:#222;">Presets</div>
<svg class="a" style="left:8.5px;top:481.8px;" width="5" height="6" viewBox="0 0 5 6"><path d="M0.6 0.4 L4.4 3 L0.6 5.6Z" fill="#666"/></svg>
<svg class="a" style="left:15px;top:481.8px;" width="8" height="6" viewBox="0 0 8 6"><path d="M0.5 0.8 H3 L3.8 1.6 H7.2 V5.5 H0.5Z" fill="#555"/></svg>
<div class="t" style="left:25px;top:482.12px;font-size:6.5px;color:#222;">Props</div>
<svg class="a" style="left:15px;top:490.15px;" width="8" height="6" viewBox="0 0 8 6"><path d="M0.5 0.8 H3 L3.8 1.6 H7.2 V5.5 H0.5Z" fill="#555"/></svg>
<div class="t" style="left:25px;top:490.47px;font-size:6.5px;color:#222;">Recording</div>
<svg class="a" style="left:8px;top:499.0px;" width="6" height="5" viewBox="0 0 6 5"><path d="M0.4 0.6 L5.6 0.6 L3 4.4Z" fill="#666"/></svg>
<svg class="a" style="left:15px;top:498.5px;" width="8" height="6" viewBox="0 0 8 6"><path d="M0.5 1 H3 L3.8 1.8 H6.5 V5.5 H0.5Z" fill="#6a6a6a"/><path d="M1.5 2.8 H7.5 L6.5 5.5 H0.5Z" fill="#8a8a8a"/></svg>
<div class="t" style="left:25px;top:498.82px;font-size:6.5px;color:#222;">Scenes</div>
<svg class="a" style="left:16.5px;top:506.85px;" width="5" height="6" viewBox="0 0 5 6"><path d="M0.6 0.4 L4.4 3 L0.6 5.6Z" fill="#666"/></svg>
<svg class="a" style="left:23px;top:506.85px;" width="8" height="6" viewBox="0 0 8 6"><path d="M0.5 0.8 H3 L3.8 1.6 H7.2 V5.5 H0.5Z" fill="#555"/></svg>
<div class="t" style="left:32px;top:507.17px;font-size:6.5px;color:#222;">R&amp;D</div>
<svg class="a" style="left:23px;top:515.2px;" width="8" height="6" viewBox="0 0 8 6"><path d="M0.5 0.8 H3 L3.8 1.6 H7.2 V5.5 H0.5Z" fill="#555"/></svg>
<div class="t" style="left:32px;top:515.52px;font-size:6.5px;color:#222;">samplescene</div>
<div class="a" style="left:0px;top:522.3499999999999px;width:106px;height:8.4px;background:#b2b2b2;"></div>
<svg class="a" style="left:23px;top:523.55px;" width="8" height="6" viewBox="0 0 8 6"><path d="M0.5 1 H3 L3.8 1.8 H6.5 V5.5 H0.5Z" fill="#6a6a6a"/><path d="M1.5 2.8 H7.5 L6.5 5.5 H0.5Z" fill="#8a8a8a"/></svg>
<div class="t" style="left:32px;top:523.87px;font-size:6.5px;color:#222;">Shots</div>
<div class="a" style="left:113px;top:410px;width:640px;height:120px;background:#c0c0c0;"></div>
<div class="a" style="left:112.5px;top:410px;width:0.8px;height:120px;background:#9e9e9e;"></div>
<div class="a" style="left:113px;top:411px;width:637px;height:10px;background:#d0d0d0;"></div>
<div class="a" style="left:113px;top:420.5px;width:637px;height:0.8px;background:#b0b0b0;"></div>
<div class="t" style="left:115px;top:413.32px;font-size:6.5px;color:#222;">Assets</div>
<svg class="a" style="left:139px;top:413px;" width="4" height="6" viewBox="0 0 4 6"><path d="M0.8 0.8 L3 3 L0.8 5.2" fill="none" stroke="#666" stroke-width="0.6"/></svg>
<div class="t" style="left:146px;top:413.32px;font-size:6.5px;color:#222;">Scenes</div>
<svg class="a" style="left:169px;top:413px;" width="4" height="6" viewBox="0 0 4 6"><path d="M0.8 0.8 L3 3 L0.8 5.2" fill="none" stroke="#666" stroke-width="0.6"/></svg>
<div class="t" style="left:175px;top:413.32px;font-size:6.5px;color:#111;font-weight:bold;">Shots</div>
<svg class="a" style="left:124px;top:430px;" width="26" height="26" viewBox="0 0 26 26"><g fill="none" stroke="#2a2a2a" stroke-width="2.9" stroke-linejoin="miter" stroke-linecap="butt"><path d="M1.6 13 L7.6 8.4 M8.6 7.4 L20.8 2.2 L23.6 10.6 M23.6 15.4 L20.8 23.8 L8.6 18.6 M7.6 17.6 L1.6 13"/><path d="M4 13 H14.2 L20.2 3.6 M14.2 13 L20.2 22.4"/></g></svg>
<div class="t" style="left:137.5px;top:462.76px;font-size:5.6px;color:#2a2a2a;transform:translateX(-50%);">Shot10</div>
<svg class="a" style="left:166.5px;top:430px;" width="26" height="26" viewBox="0 0 26 26"><g fill="none" stroke="#2a2a2a" stroke-width="2.9" stroke-linejoin="miter" stroke-linecap="butt"><path d="M1.6 13 L7.6 8.4 M8.6 7.4 L20.8 2.2 L23.6 10.6 M23.6 15.4 L20.8 23.8 L8.6 18.6 M7.6 17.6 L1.6 13"/><path d="M4 13 H14.2 L20.2 3.6 M14.2 13 L20.2 22.4"/></g></svg>
<div class="t" style="left:180.0px;top:462.76px;font-size:5.6px;color:#2a2a2a;transform:translateX(-50%);">Shot20</div>
<svg class="a" style="left:208px;top:430px;" width="26" height="26" viewBox="0 0 26 26"><g fill="none" stroke="#2a2a2a" stroke-width="2.9" stroke-linejoin="miter" stroke-linecap="butt"><path d="M1.6 13 L7.6 8.4 M8.6 7.4 L20.8 2.2 L23.6 10.6 M23.6 15.4 L20.8 23.8 L8.6 18.6 M7.6 17.6 L1.6 13"/><path d="M4 13 H14.2 L20.2 3.6 M14.2 13 L20.2 22.4"/></g></svg>
<div class="t" style="left:221.5px;top:462.76px;font-size:5.6px;color:#2a2a2a;transform:translateX(-50%);">Shot30</div>
<svg class="a" style="left:249.5px;top:430px;" width="26" height="26" viewBox="0 0 26 26"><g fill="none" stroke="#2a2a2a" stroke-width="2.9" stroke-linejoin="miter" stroke-linecap="butt"><path d="M1.6 13 L7.6 8.4 M8.6 7.4 L20.8 2.2 L23.6 10.6 M23.6 15.4 L20.8 23.8 L8.6 18.6 M7.6 17.6 L1.6 13"/><path d="M4 13 H14.2 L20.2 3.6 M14.2 13 L20.2 22.4"/></g></svg>
<div class="t" style="left:263.0px;top:462.76px;font-size:5.6px;color:#2a2a2a;transform:translateX(-50%);">Shot40</div>
<svg class="a" style="left:291px;top:430px;" width="26" height="26" viewBox="0 0 26 26"><g fill="none" stroke="#2a2a2a" stroke-width="2.9" stroke-linejoin="miter" stroke-linecap="butt"><path d="M1.6 13 L7.6 8.4 M8.6 7.4 L20.8 2.2 L23.6 10.6 M23.6 15.4 L20.8 23.8 L8.6 18.6 M7.6 17.6 L1.6 13"/><path d="M4 13 H14.2 L20.2 3.6 M14.2 13 L20.2 22.4"/></g></svg>
<div class="t" style="left:304.5px;top:462.76px;font-size:5.6px;color:#2a2a2a;transform:translateX(-50%);">Shot50</div>
<svg class="a" style="left:333px;top:430px;" width="26" height="26" viewBox="0 0 26 26"><g fill="none" stroke="#2a2a2a" stroke-width="2.9" stroke-linejoin="miter" stroke-linecap="butt"><path d="M1.6 13 L7.6 8.4 M8.6 7.4 L20.8 2.2 L23.6 10.6 M23.6 15.4 L20.8 23.8 L8.6 18.6 M7.6 17.6 L1.6 13"/><path d="M4 13 H14.2 L20.2 3.6 M14.2 13 L20.2 22.4"/></g></svg>
<div class="t" style="left:346.5px;top:462.76px;font-size:5.6px;color:#2a2a2a;transform:translateX(-50%);">Shot60</div>
<svg class="a" style="left:374.5px;top:430px;" width="26" height="26" viewBox="0 0 26 26"><g fill="none" stroke="#2a2a2a" stroke-width="2.9" stroke-linejoin="miter" stroke-linecap="butt"><path d="M1.6 13 L7.6 8.4 M8.6 7.4 L20.8 2.2 L23.6 10.6 M23.6 15.4 L20.8 23.8 L8.6 18.6 M7.6 17.6 L1.6 13"/><path d="M4 13 H14.2 L20.2 3.6 M14.2 13 L20.2 22.4"/></g></svg>
<div class="t" style="left:388.0px;top:462.76px;font-size:5.6px;color:#2a2a2a;transform:translateX(-50%);">Shot70</div>
<svg class="a" style="left:416px;top:430px;" width="26" height="26" viewBox="0 0 26 26"><g fill="none" stroke="#2a2a2a" stroke-width="2.9" stroke-linejoin="miter" stroke-linecap="butt"><path d="M1.6 13 L7.6 8.4 M8.6 7.4 L20.8 2.2 L23.6 10.6 M23.6 15.4 L20.8 23.8 L8.6 18.6 M7.6 17.6 L1.6 13"/><path d="M4 13 H14.2 L20.2 3.6 M14.2 13 L20.2 22.4"/></g></svg>
<div class="t" style="left:429.5px;top:462.76px;font-size:5.6px;color:#2a2a2a;transform:translateX(-50%);">Shot80</div>
<svg class="a" style="left:458px;top:430px;" width="26" height="26" viewBox="0 0 26 26"><g fill="none" stroke="#2a2a2a" stroke-width="2.9" stroke-linejoin="miter" stroke-linecap="butt"><path d="M1.6 13 L7.6 8.4 M8.6 7.4 L20.8 2.2 L23.6 10.6 M23.6 15.4 L20.8 23.8 L8.6 18.6 M7.6 17.6 L1.6 13"/><path d="M4 13 H14.2 L20.2 3.6 M14.2 13 L20.2 22.4"/></g></svg>
<div class="t" style="left:471.5px;top:462.76px;font-size:5.6px;color:#2a2a2a;transform:translateX(-50%);">Shot90</div>
<svg class="a" style="left:499.5px;top:430px;" width="26" height="26" viewBox="0 0 26 26"><g fill="none" stroke="#2a2a2a" stroke-width="2.9" stroke-linejoin="miter" stroke-linecap="butt"><path d="M1.6 13 L7.6 8.4 M8.6 7.4 L20.8 2.2 L23.6 10.6 M23.6 15.4 L20.8 23.8 L8.6 18.6 M7.6 17.6 L1.6 13"/><path d="M4 13 H14.2 L20.2 3.6 M14.2 13 L20.2 22.4"/></g></svg>
<div class="t" style="left:513.0px;top:462.76px;font-size:5.6px;color:#2a2a2a;transform:translateX(-50%);">Shot100</div>
<svg class="a" style="left:541px;top:430px;" width="26" height="26" viewBox="0 0 26 26"><g fill="none" stroke="#2a2a2a" stroke-width="2.9" stroke-linejoin="miter" stroke-linecap="butt"><path d="M1.6 13 L7.6 8.4 M8.6 7.4 L20.8 2.2 L23.6 10.6 M23.6 15.4 L20.8 23.8 L8.6 18.6 M7.6 17.6 L1.6 13"/><path d="M4 13 H14.2 L20.2 3.6 M14.2 13 L20.2 22.4"/></g></svg>
<div class="t" style="left:554.5px;top:462.76px;font-size:5.6px;color:#2a2a2a;transform:translateX(-50%);">Shot110</div>
<svg class="a" style="left:582.5px;top:430px;" width="26" height="26" viewBox="0 0 26 26"><g fill="none" stroke="#2a2a2a" stroke-width="2.9" stroke-linejoin="miter" stroke-linecap="butt"><path d="M1.6 13 L7.6 8.4 M8.6 7.4 L20.8 2.2 L23.6 10.6 M23.6 15.4 L20.8 23.8 L8.6 18.6 M7.6 17.6 L1.6 13"/><path d="M4 13 H14.2 L20.2 3.6 M14.2 13 L20.2 22.4"/></g></svg>
<div class="t" style="left:596.0px;top:462.76px;font-size:5.6px;color:#2a2a2a;transform:translateX(-50%);">Shot120</div>
<svg class="a" style="left:624px;top:430px;" width="26" height="26" viewBox="0 0 26 26"><g fill="none" stroke="#2a2a2a" stroke-width="2.9" stroke-linejoin="miter" stroke-linecap="butt"><path d="M1.6 13 L7.6 8.4 M8.6 7.4 L20.8 2.2 L23.6 10.6 M23.6 15.4 L20.8 23.8 L8.6 18.6 M7.6 17.6 L1.6 13"/><path d="M4 13 H14.2 L20.2 3.6 M14.2 13 L20.2 22.4"/></g></svg>
<div class="t" style="left:637.5px;top:462.76px;font-size:5.6px;color:#2a2a2a;transform:translateX(-50%);">Shot130</div>
<svg class="a" style="left:665.5px;top:430px;" width="26" height="26" viewBox="0 0 26 26"><g fill="none" stroke="#2a2a2a" stroke-width="2.9" stroke-linejoin="miter" stroke-linecap="butt"><path d="M1.6 13 L7.6 8.4 M8.6 7.4 L20.8 2.2 L23.6 10.6 M23.6 15.4 L20.8 23.8 L8.6 18.6 M7.6 17.6 L1.6 13"/><path d="M4 13 H14.2 L20.2 3.6 M14.2 13 L20.2 22.4"/></g></svg>
<div class="t" style="left:679.0px;top:462.76px;font-size:5.6px;color:#2a2a2a;transform:translateX(-50%);">Shot140</div>
<svg class="a" style="left:707px;top:430px;" width="26" height="26" viewBox="0 0 26 26"><g fill="none" stroke="#2a2a2a" stroke-width="2.9" stroke-linejoin="miter" stroke-linecap="butt"><path d="M1.6 13 L7.6 8.4 M8.6 7.4 L20.8 2.2 L23.6 10.6 M23.6 15.4 L20.8 23.8 L8.6 18.6 M7.6 17.6 L1.6 13"/><path d="M4 13 H14.2 L20.2 3.6 M14.2 13 L20.2 22.4"/></g></svg>
<div class="t" style="left:720.5px;top:462.76px;font-size:5.6px;color:#2a2a2a;transform:translateX(-50%);">Shot150</div>
<svg class="a" style="left:124px;top:480px;" width="26" height="26" viewBox="0 0 26 26"><g fill="none" stroke="#2a2a2a" stroke-width="2.9" stroke-linejoin="miter" stroke-linecap="butt"><path d="M1.6 13 L7.6 8.4 M8.6 7.4 L20.8 2.2 L23.6 10.6 M23.6 15.4 L20.8 23.8 L8.6 18.6 M7.6 17.6 L1.6 13"/><path d="M4 13 H14.2 L20.2 3.6 M14.2 13 L20.2 22.4"/></g></svg>
<div class="t" style="left:137.5px;top:511.76px;font-size:5.6px;color:#2a2a2a;transform:translateX(-50%);">Shot160</div>
<svg class="a" style="left:166.5px;top:480px;" width="26" height="26" viewBox="0 0 26 26"><g fill="none" stroke="#2a2a2a" stroke-width="2.9" stroke-linejoin="miter" stroke-linecap="butt"><path d="M1.6 13 L7.6 8.4 M8.6 7.4 L20.8 2.2 L23.6 10.6 M23.6 15.4 L20.8 23.8 L8.6 18.6 M7.6 17.6 L1.6 13"/><path d="M4 13 H14.2 L20.2 3.6 M14.2 13 L20.2 22.4"/></g></svg>
<div class="t" style="left:180.0px;top:511.76px;font-size:5.6px;color:#2a2a2a;transform:translateX(-50%);">Shot170</div>
<div class="a" style="left:744px;top:421px;width:6px;height:101px;background:#b4b4b4;"></div>
<svg class="a" style="left:745px;top:423px;" width="5" height="4" viewBox="0 0 5 4"><path d="M0.5 3.2 H4.5 L2.5 0.6Z" fill="#444"/></svg>
<div class="a" style="left:745px;top:429px;width:4px;height:82px;background:#9a9a9a;border-radius:2px"></div>
<svg class="a" style="left:745px;top:515px;" width="5" height="4" viewBox="0 0 5 4"><path d="M0.5 0.8 H4.5 L2.5 3.4Z" fill="#444"/></svg>
<div class="a" style="left:113px;top:522px;width:637px;height:8px;background:#cbcbcb;"></div>
<div class="a" style="left:715px;top:525px;width:28px;height:0.8px;background:#777;"></div>
<svg class="a" style="left:728px;top:522px;" width="6" height="6" viewBox="0 0 6 6"><circle cx="3" cy="3" r="2.2" fill="#555"/></svg>
<div class="a" style="left:750px;top:410px;width:3px;height:120px;background:#c8c8c8;"></div>
<div class="a" style="left:0px;top:530px;width:1000px;height:12px;background:#a5a5a5;"></div>
<svg class="a" style="left:1px;top:530.5px;" width="10" height="10" viewBox="0 0 10 10"><circle cx="5" cy="5" r="4" fill="#f2f2f2"/><rect x="4.4" y="2.3" width="1.2" height="3.6" fill="#333"/><rect x="4.4" y="6.6" width="1.2" height="1.2" fill="#333"/></svg>
<div class="t" style="left:12px;top:533.32px;font-size:6.5px;color:#1a1a1a;">[PathTracer] Loaded programs and built CL kernels in 0.568 secs -&gt; Timestamps: [487.604 - 488.172].</div>
<div class="t" style="right:16px;top:533.32px;font-size:6.5px;color:#1a1a1a;">Auto Generate Lighting On</div>
</div></body></html>
